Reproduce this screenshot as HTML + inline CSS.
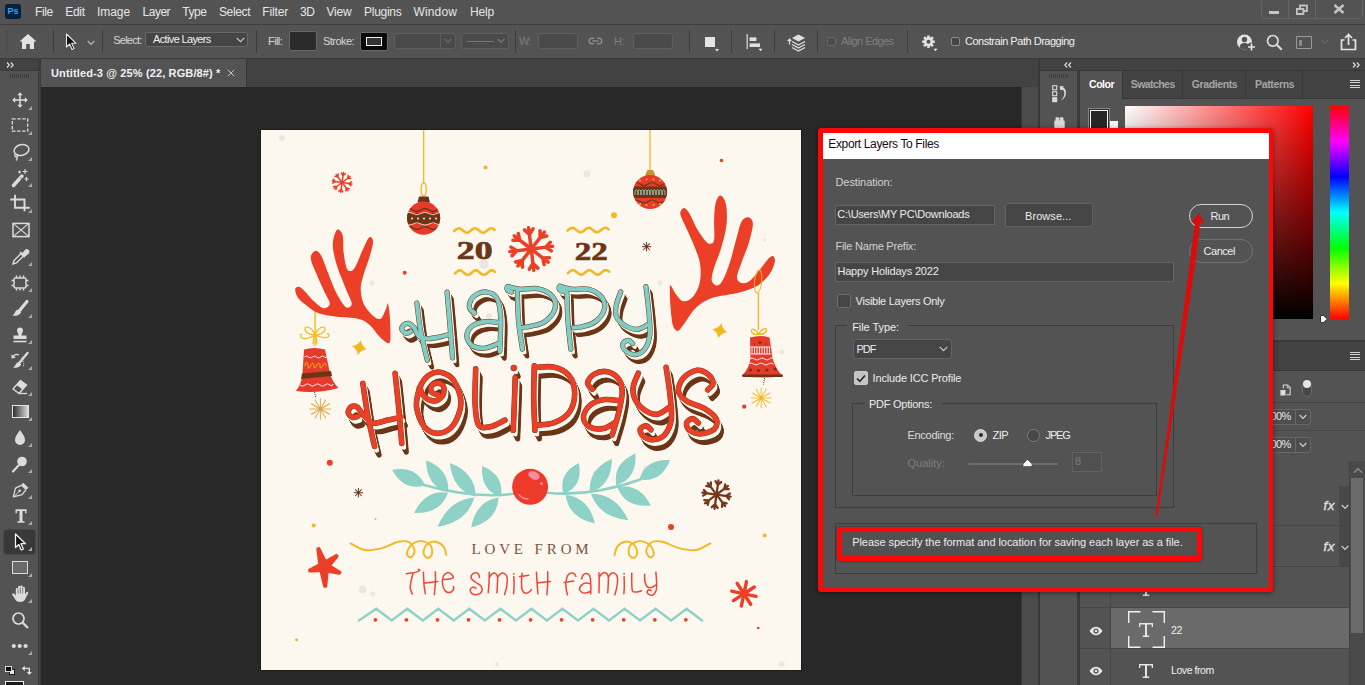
<!DOCTYPE html>
<html><head><meta charset="utf-8"><title>Photoshop</title>
<style>
html,body{margin:0;padding:0}
body{width:1365px;height:685px;overflow:hidden;position:relative;background:#535353;font-family:"Liberation Sans",sans-serif}
.a{position:absolute;display:block}
.bx{box-sizing:border-box}
.t{position:absolute;white-space:nowrap;display:block}
svg{overflow:visible}
</style></head>
<body>
<div class="a" style="left:0px;top:0px;width:1365px;height:24px;background:#535353;"></div>
<div class="a" style="left:5px;top:4px;width:16px;height:15px;background:#04213d;border-radius:3px;"></div>
<span class="t" style="left:7.50px;top:5.00px;font:bold 9px/13px 'Liberation Sans',sans-serif;color:#31a8ff;letter-spacing:-0.005px;">Ps</span>
<span class="t" style="left:35.10px;top:4.20px;font:12px/16px 'Liberation Sans',sans-serif;color:#e6e6e6;letter-spacing:-0.409px;">File</span>
<span class="t" style="left:65.30px;top:4.20px;font:12px/16px 'Liberation Sans',sans-serif;color:#e6e6e6;letter-spacing:-0.319px;">Edit</span>
<span class="t" style="left:97.10px;top:4.20px;font:12px/16px 'Liberation Sans',sans-serif;color:#e6e6e6;letter-spacing:-0.090px;">Image</span>
<span class="t" style="left:142.50px;top:4.20px;font:12px/16px 'Liberation Sans',sans-serif;color:#e6e6e6;letter-spacing:-0.484px;">Layer</span>
<span class="t" style="left:182.30px;top:4.20px;font:12px/16px 'Liberation Sans',sans-serif;color:#e6e6e6;letter-spacing:-0.454px;">Type</span>
<span class="t" style="left:218.90px;top:4.20px;font:12px/16px 'Liberation Sans',sans-serif;color:#e6e6e6;letter-spacing:-0.325px;">Select</span>
<span class="t" style="left:262.30px;top:4.20px;font:12px/16px 'Liberation Sans',sans-serif;color:#e6e6e6;letter-spacing:-0.128px;">Filter</span>
<span class="t" style="left:300.10px;top:4.20px;font:12px/16px 'Liberation Sans',sans-serif;color:#e6e6e6;letter-spacing:-0.420px;">3D</span>
<span class="t" style="left:326.50px;top:4.20px;font:12px/16px 'Liberation Sans',sans-serif;color:#e6e6e6;letter-spacing:-0.198px;">View</span>
<span class="t" style="left:364.00px;top:4.20px;font:12px/16px 'Liberation Sans',sans-serif;color:#e6e6e6;letter-spacing:-0.265px;">Plugins</span>
<span class="t" style="left:413.50px;top:4.20px;font:12px/16px 'Liberation Sans',sans-serif;color:#e6e6e6;letter-spacing:0.137px;">Window</span>
<span class="t" style="left:470.00px;top:4.20px;font:12px/16px 'Liberation Sans',sans-serif;color:#e6e6e6;letter-spacing:-0.170px;">Help</span>
<div class="a bx" style="left:1260.500px;top:-2px;width:102.500px;height:21px;border:1px solid #646464;border-radius:0 0 4px 4px;background:#535353"></div>
<div class="a" style="left:1288px;top:0px;width:1px;height:18px;background:#646464;"></div>
<div class="a" style="left:1315px;top:0px;width:1px;height:18px;background:#646464;"></div>
<div class="a" style="left:1269px;top:11px;width:10px;height:3px;background:#c4c4c4;"></div>
<svg class="a" style="left:1295px;top:4px" width="14" height="12" viewBox="0 0 14 12"><path d="M1.900 5h6.500v5h-6.500zM5 5v-3.500h7v5.500h-3.500" fill="none" stroke="#c0c0c0" stroke-width="1.800"/></svg>
<svg class="a" style="left:1333px;top:4px" width="12" height="10" viewBox="0 0 12 10"><path d="M1.500 1l9 8M10.500 1l-9 8" fill="none" stroke="#c4c4c4" stroke-width="2.400"/></svg>
<div class="a" style="left:0px;top:24px;width:1365px;height:1px;background:#3f3f3f;"></div>
<div class="a" style="left:0px;top:25px;width:1365px;height:33px;background:#535353;"></div>
<div class="a" style="left:0px;top:58px;width:1365px;height:1px;background:#3a3a3a;"></div>
<div class="a" style="left:6px;top:31px;width:2px;height:21px;background:repeating-linear-gradient(#474747 0 1px,transparent 1px 2px)"></div>
<svg class="a" style="left:19px;top:33px" width="18" height="17" viewBox="0 0 18 17"><path d="M9 1L0.5 8.5h2.5v7.5h4.2v-5h3.6v5h4.2v-7.5h2.5z" fill="#e2e2e2"/></svg>
<div class="a" style="left:53px;top:30px;width:1px;height:23px;background:#3c3c3c;"></div>
<div class="a" style="left:102px;top:30px;width:1px;height:23px;background:#3c3c3c;"></div>
<div class="a" style="left:256px;top:30px;width:1px;height:23px;background:#3c3c3c;"></div>
<div class="a" style="left:515px;top:30px;width:1px;height:23px;background:#3c3c3c;"></div>
<div class="a" style="left:689px;top:30px;width:1px;height:23px;background:#3c3c3c;"></div>
<div class="a" style="left:731px;top:30px;width:1px;height:23px;background:#3c3c3c;"></div>
<div class="a" style="left:774px;top:30px;width:1px;height:23px;background:#3c3c3c;"></div>
<div class="a" style="left:817px;top:30px;width:1px;height:23px;background:#3c3c3c;"></div>
<div class="a" style="left:907px;top:30px;width:1px;height:23px;background:#3c3c3c;"></div>
<svg class="a" style="left:65px;top:33px" width="13" height="18" viewBox="0 0 13 18"><path d="M1.5 1v13l3.2-3 2.3 5.5 2-0.9-2.3-5.3h4.3z" fill="#111" stroke="#e8e8e8" stroke-width="1.1" stroke-linejoin="round"/></svg>
<svg class="a" style="left:87px;top:40px" width="8" height="6" viewBox="0 0 8 6"><path d="M0.7 1l3.3 3.3L7.3 1" fill="none" stroke="#b8b8b8" stroke-width="1.2"/></svg>
<span class="t" style="left:113.30px;top:32.80px;font:11px/15px 'Liberation Sans',sans-serif;color:#d6d6d6;letter-spacing:-0.776px;">Select:</span>
<div class="a bx" style="left:144.5px;top:32px;width:103px;height:15px;background:#454545;border:1px solid #686868;border-radius:3px"></div>
<span class="t" style="left:153.00px;top:32.00px;font:11px/15px 'Liberation Sans',sans-serif;color:#f0f0f0;letter-spacing:-0.641px;">Active Layers</span>
<svg class="a" style="left:236px;top:37px" width="9" height="6" viewBox="0 0 9 6"><path d="M0.7 0.8l3.8 3.8L8.3 0.8" fill="none" stroke="#c8c8c8" stroke-width="1.2"/></svg>
<span class="t" style="left:268.00px;top:33.50px;font:11px/15px 'Liberation Sans',sans-serif;color:#d6d6d6;letter-spacing:-0.581px;">Fill:</span>
<div class="a bx" style="left:288.5px;top:31px;width:28.5px;height:20px;background:#2b2b2b;border:1px solid #676767;border-radius:2px"></div>
<span class="t" style="left:323.00px;top:33.50px;font:11px/15px 'Liberation Sans',sans-serif;color:#d6d6d6;letter-spacing:-0.550px;">Stroke:</span>
<div class="a bx" style="left:360px;top:32px;width:27.5px;height:18.5px;background:#0a0a0a;border:1px solid #6a6a6a;border-radius:2px"></div>
<div class="a bx" style="left:366px;top:37px;width:15.5px;height:8.5px;border:1.5px solid #f0f0f0;background:#333"></div>
<div class="a bx" style="left:393.5px;top:33px;width:62px;height:16px;background:#4a4a4a;border:1px solid #5f5f5f;border-radius:3px"></div>
<div class="a" style="left:440px;top:34px;width:1px;height:14px;background:#5f5f5f;"></div>
<svg class="a" style="left:444px;top:38px" width="8" height="6" viewBox="0 0 8 6"><path d="M0.7 1l3.3 3.3L7.3 1" fill="none" stroke="#6e6e6e" stroke-width="1.1"/></svg>
<div class="a bx" style="left:461px;top:33px;width:48px;height:16px;background:#4a4a4a;border:1px solid #5f5f5f;border-radius:3px"></div>
<div class="a" style="left:467px;top:41px;width:27px;height:1px;background:#767676;"></div>
<svg class="a" style="left:497px;top:38px" width="8" height="6" viewBox="0 0 8 6"><path d="M0.7 1l3.3 3.3L7.3 1" fill="none" stroke="#7a7a7a" stroke-width="1.1"/></svg>
<span class="t" style="left:519.00px;top:33.50px;font:11px/15px 'Liberation Sans',sans-serif;color:#7d7d7d;letter-spacing:-1.120px;">W:</span>
<div class="a bx" style="left:537.5px;top:33px;width:40px;height:16px;background:#4a4a4a;border:1px solid #5f5f5f;border-radius:3px"></div>
<svg class="a" style="left:588px;top:36px" width="15" height="10" viewBox="0 0 15 10"><path d="M6 2.2H4a2.8 2.8 0 000 5.6h2M9 2.2h2a2.8 2.8 0 010 5.6H9M4.5 5h6" fill="none" stroke="#8a8a8a" stroke-width="1.4"/></svg>
<span class="t" style="left:614.00px;top:33.50px;font:11px/15px 'Liberation Sans',sans-serif;color:#7d7d7d;letter-spacing:0.000px;">H:</span>
<div class="a bx" style="left:632.5px;top:33px;width:40px;height:16px;background:#4a4a4a;border:1px solid #5f5f5f;border-radius:3px"></div>
<div class="a" style="left:704.5px;top:36.6px;width:10.700000000000045px;height:10.600000000000001px;background:#e4e4e4;"></div>
<svg class="a" style="left:715px;top:48.800px" width="4" height="2.400" viewBox="0 0 4 2.400"><path d="M0 0h4L2 2.400z" fill="#e4e4e4"/></svg>
<svg class="a" style="left:746px;top:34px" width="18" height="18" viewBox="0 0 18 18"><path d="M1.200 0v15" stroke="#e0e0e0" stroke-width="1.200"/><rect x="3.600" y="3.400" width="6.800" height="3.600" fill="#e0e0e0"/><rect x="3.600" y="9.400" width="10.400" height="3.600" fill="#e0e0e0"/><path d="M12.500 14.800h4l-2 2.400z" fill="#e4e4e4"/></svg>
<svg class="a" style="left:786px;top:33px" width="20" height="19" viewBox="0 0 20 19"><path d="M3.500 11.500V6.300M1.600 8.200l1.900-2.100 1.900 2.100" fill="none" stroke="#e0e0e0" stroke-width="1.200"/><path d="M12.5 1.5L19 5l-6.500 3.500L6 5z" fill="#e0e0e0"/><path d="M6 8.500l6.500 3.500 6.500-3.500M6 11.500l6.500 3.500 6.500-3.500M6 14.500l6.500 3.500 6.500-3.500" fill="none" stroke="#e0e0e0" stroke-width="1.3"/></svg>
<div class="a bx" style="left:826.5px;top:36.500px;width:9.500px;height:9.500px;border:1px solid #666;border-radius:2px;background:#4c4c4c"></div>
<span class="t" style="left:841.00px;top:33.50px;font:11px/15px 'Liberation Sans',sans-serif;color:#7f7f7f;letter-spacing:-0.564px;">Align Edges</span>
<svg class="a" style="left:920px;top:33px" width="19" height="19" viewBox="0 0 19 19"><g transform="translate(8.500 8.700) scale(0.780)"><g fill="#e4e4e4"><rect x="-1.700" y="-8" width="3.400" height="16" transform="rotate(0)"/><rect x="-1.700" y="-8" width="3.400" height="16" transform="rotate(45)"/><rect x="-1.700" y="-8" width="3.400" height="16" transform="rotate(90)"/><rect x="-1.700" y="-8" width="3.400" height="16" transform="rotate(135)"/><circle r="5.600"/></g><circle r="2.600" fill="#535353"/></g><path d="M13.500 15.800h4l-2 2.400z" fill="#e4e4e4"/></svg>
<div class="a bx" style="left:950.5px;top:36.500px;width:9.500px;height:9.500px;border:1px solid #8a8a8a;border-radius:2px;background:#454545"></div>
<span class="t" style="left:965.00px;top:33.50px;font:11px/15px 'Liberation Sans',sans-serif;color:#f0f0f0;letter-spacing:-0.476px;">Constrain Path Dragging</span>
<svg class="a" style="left:1236px;top:33px" width="21" height="20" viewBox="0 0 21 20"><circle cx="8.500" cy="9" r="7.500" fill="#e4e4e4"/><circle cx="8.500" cy="6.500" r="2.700" fill="#535353"/><path d="M3.500 14.500c0.500-3.500 2.500-4.500 5-4.500s4.500 1 5 4.500a7 7 0 01-10 0z" fill="#535353"/><circle cx="15.500" cy="14" r="4.500" fill="#535353"/><path d="M15.500 10.500v7M12 14h7" stroke="#e4e4e4" stroke-width="1.600"/></svg>
<svg class="a" style="left:1265.500px;top:34px" width="17" height="17" viewBox="0 0 17 17"><circle cx="6.800" cy="6.800" r="5.300" fill="none" stroke="#dcdcdc" stroke-width="1.700"/><path d="M10.800 10.800l5 5" stroke="#dcdcdc" stroke-width="2"/></svg>
<div class="a bx" style="left:1295.500px;top:36px;width:16px;height:13px;border:1.500px solid #9a9a9a;border-radius:1px"></div>
<div class="a" style="left:1298.5px;top:39.5px;width:3.0px;height:6.5px;background:#8a8a8a;"></div>
<svg class="a" style="left:1321px;top:39px" width="8" height="6" viewBox="0 0 8 6"><path d="M0.700 1l3.300 3.300L7.300 1" fill="none" stroke="#6a6a6a" stroke-width="1.100"/></svg>
<svg class="a" style="left:1340px;top:32.500px" width="17" height="18" viewBox="0 0 17 18"><path d="M4.500 7H1.500v9.500h14V7h-3" fill="none" stroke="#e4e4e4" stroke-width="1.700"/><path d="M8.500 12V2M5 5l3.500-3.500L12 5" fill="none" stroke="#e4e4e4" stroke-width="1.700"/></svg>
<div class="a" style="left:41px;top:59px;width:997px;height:28px;background:#424242;"></div>
<div class="a" style="left:1038px;top:59px;width:2px;height:626px;background:#383838;"></div>
<div class="a" style="left:41px;top:59px;width:205px;height:28px;background:#535353;"></div>
<div class="a" style="left:246px;top:59px;width:1px;height:28px;background:#383838;"></div>
<span class="t" style="left:51.00px;top:65.50px;font:bold 11px/15px 'Liberation Sans',sans-serif;color:#f0f0f0;letter-spacing:0.133px;">Untitled-3 @ 25% (22, RGB/8#) *</span>
<svg class="a" style="left:227px;top:69px" width="8" height="8" viewBox="0 0 8 8"><path d="M0.800 0.800l6.400 6.400M7.200 0.800L0.800 7.200" stroke="#c4c4c4" stroke-width="1"/></svg>
<div class="a" style="left:41px;top:87px;width:981px;height:598px;background:#282828;"></div>
<div class="a" style="left:1021.5px;top:87px;width:16.5px;height:598px;background:#4b4b4b;"></div>
<div class="a" style="left:1020.5px;top:87px;width:1.0px;height:598px;background:#353535;"></div>
<div class="a" style="left:0px;top:59px;width:38px;height:626px;background:#535353;"></div>
<div class="a" style="left:38px;top:59px;width:3px;height:626px;background:#3a3a3a;"></div>
<div class="a" style="left:39.2px;top:71px;width:1.0px;height:614px;background:#474747;"></div>
<div class="a" style="left:0px;top:59px;width:38px;height:11px;background:#424242;"></div>
<div class="a" style="left:0px;top:70px;width:38px;height:1px;background:#3a3a3a;"></div>
<svg class="a" style="left:5.500px;top:62px" width="8" height="6" viewBox="0 0 8 6"><path d="M1 0.500L3.400 3 1 5.500M4.800 0.500L7.200 3 4.800 5.500" fill="none" stroke="#e0e0e0" stroke-width="1.100"/></svg>
<div class="a" style="left:10px;top:74px;width:20px;height:4px;background:repeating-linear-gradient(90deg,#3e3e3e 0 1px,transparent 1px 2px)"></div>
<div class="a" style="left:4px;top:530px;width:31px;height:24px;background:#383838;border-radius:3px;box-shadow:0 0 0 1px #484848"></div>
<svg class="a" style="left:9.5px;top:90.4px" width="20" height="20" viewBox="0 0 20 20"><g transform="translate(10 10) scale(0.800) translate(-10 -10)"><path d="M10 2v16M2 10h16" stroke="#dcdcdc" stroke-width="1.900"/><path d="M10 0.200l3.300 3.800h-6.600zM10 19.800l3.300-3.800h-6.600zM0.200 10l3.800-3.300v6.600zM19.800 10l-3.800-3.300v6.600z" fill="#dcdcdc"/></g></svg>
<svg class="a" style="left:10.3px;top:115.3px" width="20" height="20" viewBox="0 0 20 20"><rect x="2.300" y="3.800" width="15.400" height="12.400" fill="none" stroke="#dcdcdc" stroke-width="1.300" stroke-dasharray="3.400 1.600"/></svg>
<svg class="a" style="left:11.0px;top:142.0px" width="20" height="20" viewBox="0 0 20 20"><ellipse cx="10.500" cy="8" rx="7.500" ry="5.300" fill="none" stroke="#dcdcdc" stroke-width="1.500" transform="rotate(-12 10.500 8)"/><path d="M5 11.500c-2 1.500-1.500 3.500 0.500 3.500s1.500-2.500-0.500-2.500M6 14.500c0.500 2 0 3-1 4" fill="none" stroke="#dcdcdc" stroke-width="1.300"/></svg>
<svg class="a" style="left:10.0px;top:168.0px" width="20" height="20" viewBox="0 0 20 20"><path d="M3.500 17.500L12 8" stroke="#dcdcdc" stroke-width="3.400" stroke-linecap="round"/><path d="M10.300 9.800l1.600 1.500" stroke="#535353" stroke-width="1"/><path d="M15 1v5M12.500 3.500h5M16.500 9v4M14.500 11h4M9.500 2.500v3M8 4h3" stroke="#dcdcdc" stroke-width="1.100"/></svg>
<svg class="a" style="left:9.5px;top:192.7px" width="20" height="20" viewBox="0 0 20 20"><path d="M5 1.800v13H19.700M0.300 6.500h14.200V18.300" fill="none" stroke="#dcdcdc" stroke-width="1.900"/></svg>
<svg class="a" style="left:10.600000000000001px;top:219.8px" width="20" height="20" viewBox="0 0 20 20"><rect x="2" y="3.400" width="16" height="13.200" fill="none" stroke="#dcdcdc" stroke-width="1.500"/><path d="M2 3.400l16 13.200M18 3.400l-16 13.200" stroke="#dcdcdc" stroke-width="1.200"/></svg>
<svg class="a" style="left:10.0px;top:247.0px" width="20" height="20" viewBox="0 0 20 20"><path d="M3 17l1-3.500 7-7 2.500 2.500-7 7z" fill="none" stroke="#dcdcdc" stroke-width="1.400"/><path d="M10 5l5 5M12 7.500l3.500-4a1.800 1.800 0 012.600 2.600L14 9.500z" fill="#dcdcdc" stroke="#dcdcdc" stroke-width="1.600"/></svg>
<svg class="a" style="left:10.0px;top:273.0px" width="20" height="20" viewBox="0 0 20 20"><rect x="4" y="5" width="12" height="10" rx="1.500" fill="none" stroke="#dcdcdc" stroke-width="1.500"/><path d="M6.500 2.500v2M10 2.500v2M13.500 2.500v2M6.500 15.500v2M10 15.500v2M13.500 15.500v2M1.500 7.500h2M1.500 12.500h2M16.500 7.500h2M16.500 12.500h2" stroke="#dcdcdc" stroke-width="1.500"/></svg>
<svg class="a" style="left:10.0px;top:298.8px" width="20" height="20" viewBox="0 0 20 20"><path d="M17 2.500L10 11" stroke="#dcdcdc" stroke-width="3.200" stroke-linecap="round"/><path d="M8.500 10.500c-3.500 0-3 4-6 6 4.500 1 8.500-1 8.500-4z" fill="#dcdcdc"/></svg>
<svg class="a" style="left:10.0px;top:325.0px" width="20" height="20" viewBox="0 0 20 20"><path d="M10 2.500a3 3 0 013 3c0 2-1.500 2.500-1.500 5h5v3.500h-13v-3.500h5c0-2.500-1.500-3-1.500-5a3 3 0 013-3z" fill="#dcdcdc"/><path d="M3.500 16.500h13" stroke="#dcdcdc" stroke-width="1.600"/></svg>
<svg class="a" style="left:10.0px;top:350.5px" width="20" height="20" viewBox="0 0 20 20"><path d="M17.500 2L10 11" stroke="#dcdcdc" stroke-width="2.400" stroke-linecap="round"/><path d="M9 11c-3 0-3 4-6 5.500 4 1 8-1 8-3.500z" fill="#dcdcdc"/><path d="M2 7a5 5 0 017-3" fill="none" stroke="#dcdcdc" stroke-width="1.300"/><path d="M1 3.500l1 4 4-1z" fill="#dcdcdc"/><path d="M13 10c1 2 1 4 0 6" fill="none" stroke="#dcdcdc" stroke-width="1" stroke-dasharray="1 1"/></svg>
<svg class="a" style="left:10.0px;top:376.5px" width="20" height="20" viewBox="0 0 20 20"><path d="M3 12l7.500-8.500 6 4.500-7.500 8.500z" fill="none" stroke="#dcdcdc" stroke-width="1.400" stroke-linejoin="round"/><path d="M6.500 8l4-4.500 6 4.500-4 4.500z" fill="#dcdcdc"/><path d="M9 16.500h8" stroke="#dcdcdc" stroke-width="1.300"/></svg>
<div class="a bx" style="left:12px;top:404.800px;width:16.500px;height:13.200px;border:1.500px solid #e4e4e4;background:linear-gradient(90deg,#303030,#d8d8d8)"></div>
<svg class="a" style="left:10.0px;top:428.0px" width="20" height="20" viewBox="0 0 20 20"><path d="M10 2c3 4.500 5 7 5 10a5 5 0 01-10 0c0-3 2-5.500 5-10z" fill="#dcdcdc"/></svg>
<svg class="a" style="left:10.0px;top:454.0px" width="20" height="20" viewBox="0 0 20 20"><circle cx="12" cy="7.500" r="4.800" fill="#dcdcdc"/><path d="M8.500 11.500L3 17.500" stroke="#dcdcdc" stroke-width="2.200" stroke-linecap="round"/></svg>
<svg class="a" style="left:10.0px;top:480.0px" width="20" height="20" viewBox="0 0 20 20"><path d="M13.200 3.100L18 7.700 15.800 9.900 11.200 5.300z" fill="#dcdcdc" stroke="#dcdcdc" stroke-width="0.600" stroke-linejoin="round"/><path d="M11.200 5.300L5.500 8.100 3.300 16.900 12.100 14.700 15.800 9.900" fill="none" stroke="#dcdcdc" stroke-width="1.300" stroke-linejoin="round"/><circle cx="9.700" cy="10.800" r="1.300" fill="#dcdcdc"/><path d="M9.700 10.800L3.600 17" stroke="#dcdcdc" stroke-width="1"/></svg>
<svg class="a" style="left:10.600000000000001px;top:506.1px" width="20" height="20" viewBox="0 0 20 20"><path d="M4.500 3.200h11v4h-1.400v-2.300h-2.600v10.300h2v1.600h-7v-1.600h2v-10.300h-2.600v2.300h-1.400z" fill="#dcdcdc"/></svg>
<svg class="a" style="left:10.0px;top:532.0px" width="20" height="20" viewBox="0 0 20 20"><path d="M5.500 2v13.500l3.300-3 2.400 5.500 2.200-1-2.400-5.300h4.500z" fill="#111" stroke="#f2f2f2" stroke-width="1.300" stroke-linejoin="round"/></svg>
<div class="a bx" style="left:11.800px;top:561.300px;width:16px;height:12.500px;border:1.500px solid #dcdcdc;background:#6a6a6a"></div>
<svg class="a" style="left:10.2px;top:584.2px" width="20" height="20" viewBox="0 0 20 20"><path d="M5.800 11.500V5.200a1.150 1.150 0 012.300 0V3a1.150 1.150 0 012.300 0V2.600a1.150 1.150 0 012.300 0V4.200a1.150 1.150 0 012.300 0V10.500l1.300-2.200c0.800-1.200 2.400-0.300 1.800 1L16 13.500c-1 3-3 4.500-5.800 4.500-3 0-4.200-1.300-5.500-3.600L2.300 10.800c-0.700-1.200 1-2.200 1.900-1z" fill="#dcdcdc"/><path d="M8.100 9.500V5M10.400 9.500V3.500M12.700 9.500V4" stroke="#535353" stroke-width="0.700"/></svg>
<svg class="a" style="left:10.0px;top:610.0px" width="20" height="20" viewBox="0 0 20 20"><circle cx="8.500" cy="8.500" r="5.500" fill="none" stroke="#dcdcdc" stroke-width="1.700"/><path d="M12.500 12.500l5.500 5.500" stroke="#dcdcdc" stroke-width="2.300"/></svg>
<svg class="a" style="left:10.0px;top:636.0px" width="20" height="20" viewBox="0 0 20 20"><circle cx="3.800" cy="10" r="2.100" fill="#dcdcdc"/><circle cx="9.700" cy="10" r="2.100" fill="#dcdcdc"/><circle cx="15.600" cy="10" r="2.100" fill="#dcdcdc"/></svg>
<svg class="a" style="left:28.3px;top:105.8px" width="4" height="4"><path d="M4 0v4H0z" fill="#a8a8a8"/></svg>
<svg class="a" style="left:28.3px;top:131.3px" width="4" height="4"><path d="M4 0v4H0z" fill="#a8a8a8"/></svg>
<svg class="a" style="left:28.3px;top:157.3px" width="4" height="4"><path d="M4 0v4H0z" fill="#a8a8a8"/></svg>
<svg class="a" style="left:28.3px;top:183.3px" width="4" height="4"><path d="M4 0v4H0z" fill="#a8a8a8"/></svg>
<svg class="a" style="left:28.3px;top:209.3px" width="4" height="4"><path d="M4 0v4H0z" fill="#a8a8a8"/></svg>
<svg class="a" style="left:28.3px;top:262.3px" width="4" height="4"><path d="M4 0v4H0z" fill="#a8a8a8"/></svg>
<svg class="a" style="left:28.3px;top:288.3px" width="4" height="4"><path d="M4 0v4H0z" fill="#a8a8a8"/></svg>
<svg class="a" style="left:28.3px;top:314.3px" width="4" height="4"><path d="M4 0v4H0z" fill="#a8a8a8"/></svg>
<svg class="a" style="left:28.3px;top:340.3px" width="4" height="4"><path d="M4 0v4H0z" fill="#a8a8a8"/></svg>
<svg class="a" style="left:28.3px;top:365.8px" width="4" height="4"><path d="M4 0v4H0z" fill="#a8a8a8"/></svg>
<svg class="a" style="left:28.3px;top:391.8px" width="4" height="4"><path d="M4 0v4H0z" fill="#a8a8a8"/></svg>
<svg class="a" style="left:28.3px;top:417.3px" width="4" height="4"><path d="M4 0v4H0z" fill="#a8a8a8"/></svg>
<svg class="a" style="left:28.3px;top:443.3px" width="4" height="4"><path d="M4 0v4H0z" fill="#a8a8a8"/></svg>
<svg class="a" style="left:28.3px;top:469.3px" width="4" height="4"><path d="M4 0v4H0z" fill="#a8a8a8"/></svg>
<svg class="a" style="left:28.3px;top:495.3px" width="4" height="4"><path d="M4 0v4H0z" fill="#a8a8a8"/></svg>
<svg class="a" style="left:28.3px;top:521.3px" width="4" height="4"><path d="M4 0v4H0z" fill="#a8a8a8"/></svg>
<svg class="a" style="left:28.3px;top:547.3px" width="4" height="4"><path d="M4 0v4H0z" fill="#a8a8a8"/></svg>
<svg class="a" style="left:28.3px;top:573.3px" width="4" height="4"><path d="M4 0v4H0z" fill="#a8a8a8"/></svg>
<svg class="a" style="left:28.3px;top:599.3px" width="4" height="4"><path d="M4 0v4H0z" fill="#a8a8a8"/></svg>
<svg class="a" style="left:28.3px;top:651.3px" width="4" height="4"><path d="M4 0v4H0z" fill="#a8a8a8"/></svg>
<div class="a bx" style="left:8.800px;top:669.300px;width:6.500px;height:6px;background:#e8e8e8;border:0.500px solid #222"></div>
<div class="a bx" style="left:5.200px;top:665.800px;width:6.500px;height:6px;background:#0a0a0a;border:1px solid #d8d8d8"></div>
<svg class="a" style="left:21px;top:664px" width="12" height="12" viewBox="0 0 12 12"><path d="M3 4.400h5.300v4.200" fill="none" stroke="#e0e0e0" stroke-width="1.400"/><path d="M0.800 4.400l3-2.600v5.200zM8.300 11l-2.600-3h5.200z" fill="#e0e0e0"/></svg>
<div class="a bx" style="left:4.500px;top:680.500px;width:19px;height:10px;background:#1a1a1a;border:1.500px solid #f0f0f0"></div>
<svg class="a" style="left:261px;top:130px" width="540" height="540" viewBox="261 130 540 540">
<rect x="261" y="130" width="540" height="540" fill="#fdf8ef"/>
<circle cx="282" cy="138" r="3" fill="#ebe8e3"/>
<circle cx="587" cy="173.7" r="3.5" fill="#ebe8e3"/>
<circle cx="484" cy="264" r="5" fill="#ebe8e3"/>
<circle cx="372" cy="283" r="2.5" fill="#ebe8e3"/>
<circle cx="660" cy="283" r="2.5" fill="#ebe8e3"/>
<circle cx="362.7" cy="589.4" r="4" fill="#ebe8e3"/>
<circle cx="372.8" cy="593.8" r="2.5" fill="#ebe8e3"/>
<circle cx="781.8" cy="664" r="3" fill="#ebe8e3"/>
<circle cx="596" cy="474" r="3.5" fill="#ebe8e3"/>
<circle cx="647" cy="470" r="4.5" fill="#ebe8e3"/>
<circle cx="782" cy="352" r="2.5" fill="#ebe8e3"/>
<circle cx="497" cy="664" r="2" fill="#ebe8e3"/>
<circle cx="489" cy="316" r="3" fill="#ebe8e3"/>
<circle cx="765" cy="240" r="1.5" fill="#ebe8e3"/>
<path d="M423.700 130V183M650 130V170" stroke="#f2b81f" stroke-width="1.300" fill="none"/>
<ellipse cx="423.700" cy="189.500" rx="2.600" ry="6.500" fill="none" stroke="#f2b81f" stroke-width="1.300"/>
<path d="M419 196.500h9.500l1.500 6h-12.500z" fill="#6b3618"/>
<circle cx="423.600" cy="218.200" r="16.600" fill="#e63a2a"/>
<clipPath id="c1"><circle cx="423.600" cy="218.200" r="16.600"/></clipPath><g clip-path="url(#c1)"><rect x="405" y="213" width="40" height="11" fill="#6b3618"/><path d="M405 210q4-3 8 0t8 0 8 0 8 0 8 0" stroke="#6b3618" stroke-width="1.300" fill="none"/><path d="M405 228q4-3 8 0t8 0 8 0 8 0 8 0" stroke="#6b3618" stroke-width="1.300" fill="none"/><path d="M405 213.500q4-2.500 8 0t8 0 8 0 8 0 8 0M405 224q4 2.500 8 0t8 0 8 0 8 0 8 0" stroke="#f6d9c8" stroke-width="0.900" fill="none"/><g fill="#f6e7d0"><circle cx="412" cy="218.500" r="1"/><circle cx="418" cy="218.500" r="1"/><circle cx="424" cy="218.500" r="1"/><circle cx="430" cy="218.500" r="1"/><circle cx="436" cy="218.500" r="1"/></g></g>
<path d="M646 173l1.500-3h5.500l1.500 3 1 3.500h-10.500z" fill="#c8922e"/>
<circle cx="650.100" cy="192" r="17" fill="#e63a2a"/>
<clipPath id="c2"><circle cx="650.100" cy="192" r="17"/></clipPath><g clip-path="url(#c2)"><rect x="630" y="186.500" width="40" height="11.500" fill="#6b3618"/><path d="M632 184q4-3 8 0t8 0 8 0 8 0 8 0M632 201.500q4-3 8 0t8 0 8 0 8 0 8 0" stroke="#6b3618" stroke-width="1.200" fill="none"/><path d="M635 195v-4q1.500-2.500 3 0v4m0 0v-4q1.500-2.500 3 0v4m0 0v-4q1.500-2.500 3 0v4m0 0v-4q1.500-2.500 3 0v4m0 0v-4q1.500-2.500 3 0v4m0 0v-4q1.500-2.500 3 0v4m0 0v-4q1.500-2.500 3 0v4m0 0v-4q1.500-2.500 3 0v4m0 0v-4q1.500-2.500 3 0v4m0 0v-4q1.500-2.500 3 0v4" stroke="#9ed0c4" stroke-width="0.800" fill="none"/><g fill="#f2b81f"><circle cx="640" cy="180.500" r="1"/><circle cx="646.500" cy="179.500" r="1"/><circle cx="653.500" cy="179.500" r="1"/><circle cx="660" cy="180.500" r="1"/><circle cx="640" cy="204" r="1"/><circle cx="646.500" cy="205" r="1"/><circle cx="653.500" cy="205" r="1"/><circle cx="660" cy="204" r="1"/></g></g>
<g transform="translate(342.1 182.5) rotate(8)" stroke="#eb3f27" stroke-width="1.5" stroke-linecap="round" fill="none"><g transform="rotate(0.0)"><path d="M0 0V-10.0M0 -6.8l-2.0 -2.4M0 -6.8l2.0 -2.4"/></g><g transform="rotate(45.0)"><path d="M0 0V-10.0M0 -6.8l-2.0 -2.4M0 -6.8l2.0 -2.4"/></g><g transform="rotate(90.0)"><path d="M0 0V-10.0M0 -6.8l-2.0 -2.4M0 -6.8l2.0 -2.4"/></g><g transform="rotate(135.0)"><path d="M0 0V-10.0M0 -6.8l-2.0 -2.4M0 -6.8l2.0 -2.4"/></g><g transform="rotate(180.0)"><path d="M0 0V-10.0M0 -6.8l-2.0 -2.4M0 -6.8l2.0 -2.4"/></g><g transform="rotate(225.0)"><path d="M0 0V-10.0M0 -6.8l-2.0 -2.4M0 -6.8l2.0 -2.4"/></g><g transform="rotate(270.0)"><path d="M0 0V-10.0M0 -6.8l-2.0 -2.4M0 -6.8l2.0 -2.4"/></g><g transform="rotate(315.0)"><path d="M0 0V-10.0M0 -6.8l-2.0 -2.4M0 -6.8l2.0 -2.4"/></g><circle r="1.4" fill="#eb3f27" stroke="none"/></g>
<g transform="translate(531.2 249.0) rotate(-7)" stroke="#eb3f27" stroke-width="3.5" stroke-linecap="round" fill="none"><g transform="rotate(0.0)"><path d="M0 0V-21.5M0 -14.6l-4.3 -5.2M0 -14.6l4.3 -5.2"/></g><g transform="rotate(45.0)"><path d="M0 0V-21.5M0 -14.6l-4.3 -5.2M0 -14.6l4.3 -5.2"/></g><g transform="rotate(90.0)"><path d="M0 0V-21.5M0 -14.6l-4.3 -5.2M0 -14.6l4.3 -5.2"/></g><g transform="rotate(135.0)"><path d="M0 0V-21.5M0 -14.6l-4.3 -5.2M0 -14.6l4.3 -5.2"/></g><g transform="rotate(180.0)"><path d="M0 0V-21.5M0 -14.6l-4.3 -5.2M0 -14.6l4.3 -5.2"/></g><g transform="rotate(225.0)"><path d="M0 0V-21.5M0 -14.6l-4.3 -5.2M0 -14.6l4.3 -5.2"/></g><g transform="rotate(270.0)"><path d="M0 0V-21.5M0 -14.6l-4.3 -5.2M0 -14.6l4.3 -5.2"/></g><g transform="rotate(315.0)"><path d="M0 0V-21.5M0 -14.6l-4.3 -5.2M0 -14.6l4.3 -5.2"/></g><circle r="3.1" fill="#eb3f27" stroke="none"/></g>
<g transform="translate(716.5 494.6) rotate(8)" stroke="#74371b" stroke-width="2.3" stroke-linecap="round" fill="none"><g transform="rotate(0.0)"><path d="M0 0V-14.3M0 -9.7l-2.9 -3.4M0 -9.7l2.9 -3.4"/></g><g transform="rotate(45.0)"><path d="M0 0V-14.3M0 -9.7l-2.9 -3.4M0 -9.7l2.9 -3.4"/></g><g transform="rotate(90.0)"><path d="M0 0V-14.3M0 -9.7l-2.9 -3.4M0 -9.7l2.9 -3.4"/></g><g transform="rotate(135.0)"><path d="M0 0V-14.3M0 -9.7l-2.9 -3.4M0 -9.7l2.9 -3.4"/></g><g transform="rotate(180.0)"><path d="M0 0V-14.3M0 -9.7l-2.9 -3.4M0 -9.7l2.9 -3.4"/></g><g transform="rotate(225.0)"><path d="M0 0V-14.3M0 -9.7l-2.9 -3.4M0 -9.7l2.9 -3.4"/></g><g transform="rotate(270.0)"><path d="M0 0V-14.3M0 -9.7l-2.9 -3.4M0 -9.7l2.9 -3.4"/></g><g transform="rotate(315.0)"><path d="M0 0V-14.3M0 -9.7l-2.9 -3.4M0 -9.7l2.9 -3.4"/></g><circle r="2.1" fill="#74371b" stroke="none"/></g>
<g transform="translate(646.6 246.7) rotate(0)" stroke="#6b3618" stroke-width="1" stroke-linecap="round" fill="none"><g transform="rotate(0.0)"><path d="M0 0V-4.3"/></g><g transform="rotate(45.0)"><path d="M0 0V-4.3"/></g><g transform="rotate(90.0)"><path d="M0 0V-4.3"/></g><g transform="rotate(135.0)"><path d="M0 0V-4.3"/></g><g transform="rotate(180.0)"><path d="M0 0V-4.3"/></g><g transform="rotate(225.0)"><path d="M0 0V-4.3"/></g><g transform="rotate(270.0)"><path d="M0 0V-4.3"/></g><g transform="rotate(315.0)"><path d="M0 0V-4.3"/></g></g>
<g transform="translate(358.4 492.7) rotate(0)" stroke="#6b3618" stroke-width="1" stroke-linecap="round" fill="none"><g transform="rotate(0.0)"><path d="M0 0V-4.3"/></g><g transform="rotate(45.0)"><path d="M0 0V-4.3"/></g><g transform="rotate(90.0)"><path d="M0 0V-4.3"/></g><g transform="rotate(135.0)"><path d="M0 0V-4.3"/></g><g transform="rotate(180.0)"><path d="M0 0V-4.3"/></g><g transform="rotate(225.0)"><path d="M0 0V-4.3"/></g><g transform="rotate(270.0)"><path d="M0 0V-4.3"/></g><g transform="rotate(315.0)"><path d="M0 0V-4.3"/></g></g>
<text transform="translate(456.8 259.3) scale(1.428 1)" font-family="Liberation Serif" font-weight="bold" font-size="25" fill="#6b3618" stroke="#6b3618" stroke-width="0.700">20</text>
<text transform="translate(574.7 260.2) scale(1.316 1)" font-family="Liberation Serif" font-weight="bold" font-size="25" fill="#6b3618" stroke="#6b3618" stroke-width="0.700">22</text>
<path d="M454.0,231.2C454.2,231.0 454.7,230.6 455.0,230.3C455.3,230.0 455.7,229.8 456.0,229.5C456.4,229.3 456.7,229.0 457.0,228.8C457.4,228.6 457.7,228.5 458.1,228.4C458.4,228.3 458.7,228.3 459.1,228.3C459.4,228.3 459.7,228.4 460.1,228.5C460.4,228.7 460.8,228.9 461.1,229.1C461.4,229.3 461.8,229.6 462.1,229.8C462.4,230.1 462.8,230.4 463.1,230.7C463.4,231.0 463.8,231.2 464.1,231.5C464.5,231.7 464.8,232.0 465.1,232.2C465.5,232.4 465.8,232.5 466.1,232.6C466.5,232.7 466.8,232.7 467.2,232.7C467.5,232.7 467.8,232.6 468.2,232.5C468.5,232.3 468.9,232.1 469.2,231.9C469.5,231.7 469.9,231.4 470.2,231.2C470.5,230.9 470.9,230.6 471.2,230.3C471.5,230.0 471.9,229.8 472.2,229.5C472.6,229.3 472.9,229.0 473.2,228.8C473.6,228.6 473.9,228.5 474.2,228.4C474.6,228.3 474.9,228.3 475.3,228.3C475.6,228.3 475.9,228.4 476.3,228.5C476.6,228.7 477.0,228.9 477.3,229.1C477.6,229.3 478.0,229.6 478.3,229.8C478.6,230.1 479.0,230.4 479.3,230.7C479.6,231.0 480.0,231.2 480.3,231.5C480.7,231.7 481.0,232.0 481.3,232.2C481.7,232.4 482.0,232.5 482.4,232.6C482.7,232.7 483.0,232.7 483.4,232.7C483.7,232.7 484.0,232.6 484.4,232.5C484.7,232.3 485.1,232.1 485.4,231.9C485.7,231.7 486.1,231.4 486.4,231.2C486.7,230.9 487.1,230.6 487.4,230.3C487.8,230.0 488.1,229.8 488.4,229.5C488.8,229.3 489.1,229.0 489.4,228.8C489.8,228.6 490.1,228.5 490.4,228.4C490.8,228.3 491.1,228.3 491.5,228.3C491.8,228.3 492.1,228.4 492.5,228.5C492.8,228.7 493.2,228.9 493.5,229.1C493.8,229.3 494.3,229.7 494.5,229.8" fill="none" stroke="#f2b81f" stroke-width="2.600" stroke-linecap="round"/>
<path d="M455.0,273.3C455.2,273.1 455.7,272.7 456.0,272.4C456.3,272.1 456.7,271.9 457.0,271.6C457.3,271.4 457.7,271.1 458.0,270.9C458.3,270.7 458.7,270.6 459.0,270.5C459.3,270.4 459.7,270.4 460.0,270.4C460.3,270.4 460.7,270.5 461.0,270.6C461.3,270.8 461.7,271.0 462.0,271.2C462.3,271.4 462.7,271.7 463.0,271.9C463.3,272.2 463.7,272.5 464.0,272.8C464.3,273.1 464.7,273.3 465.0,273.6C465.3,273.8 465.7,274.1 466.0,274.3C466.3,274.5 466.7,274.6 467.0,274.7C467.3,274.8 467.7,274.8 468.0,274.8C468.3,274.8 468.7,274.7 469.0,274.6C469.3,274.4 469.7,274.2 470.0,274.0C470.3,273.8 470.7,273.5 471.0,273.3C471.3,273.0 471.7,272.7 472.0,272.4C472.3,272.1 472.7,271.9 473.0,271.6C473.3,271.4 473.7,271.1 474.0,270.9C474.3,270.7 474.7,270.6 475.0,270.5C475.3,270.4 475.7,270.4 476.0,270.4C476.3,270.4 476.7,270.5 477.0,270.6C477.3,270.8 477.7,271.0 478.0,271.2C478.3,271.4 478.7,271.7 479.0,271.9C479.3,272.2 479.7,272.5 480.0,272.8C480.3,273.1 480.7,273.3 481.0,273.6C481.3,273.8 481.7,274.1 482.0,274.3C482.3,274.5 482.7,274.6 483.0,274.7C483.3,274.8 483.7,274.8 484.0,274.8C484.3,274.8 484.7,274.7 485.0,274.6C485.3,274.4 485.7,274.2 486.0,274.0C486.3,273.8 486.7,273.5 487.0,273.3C487.3,273.0 487.7,272.7 488.0,272.4C488.3,272.1 488.7,271.9 489.0,271.6C489.3,271.4 489.7,271.1 490.0,270.9C490.3,270.7 490.7,270.6 491.0,270.5C491.3,270.4 491.7,270.4 492.0,270.4C492.3,270.4 492.7,270.5 493.0,270.6C493.3,270.8 493.7,271.0 494.0,271.2C494.3,271.4 494.8,271.8 495.0,271.9" fill="none" stroke="#f2b81f" stroke-width="2.600" stroke-linecap="round"/>
<path d="M567.5,230.7C567.7,230.5 568.2,230.1 568.5,229.8C568.9,229.5 569.2,229.3 569.5,229.0C569.9,228.8 570.2,228.5 570.6,228.3C570.9,228.1 571.3,228.0 571.6,227.9C571.9,227.8 572.3,227.8 572.6,227.8C573.0,227.8 573.3,227.9 573.6,228.0C574.0,228.2 574.3,228.4 574.7,228.6C575.0,228.8 575.4,229.1 575.7,229.3C576.0,229.6 576.4,229.9 576.7,230.2C577.1,230.5 577.4,230.7 577.8,231.0C578.1,231.2 578.4,231.5 578.8,231.7C579.1,231.9 579.5,232.0 579.8,232.1C580.1,232.2 580.5,232.2 580.8,232.2C581.2,232.2 581.5,232.1 581.9,232.0C582.2,231.8 582.5,231.6 582.9,231.4C583.2,231.2 583.6,230.9 583.9,230.7C584.2,230.4 584.6,230.1 584.9,229.8C585.3,229.5 585.6,229.3 586.0,229.0C586.3,228.8 586.6,228.5 587.0,228.3C587.3,228.1 587.7,228.0 588.0,227.9C588.3,227.8 588.7,227.8 589.0,227.8C589.4,227.8 589.7,227.9 590.0,228.0C590.4,228.2 590.7,228.4 591.1,228.6C591.4,228.8 591.8,229.1 592.1,229.3C592.4,229.6 592.8,229.9 593.1,230.2C593.5,230.5 593.8,230.7 594.1,231.0C594.5,231.2 594.8,231.5 595.2,231.7C595.5,231.9 595.9,232.0 596.2,232.1C596.5,232.2 596.9,232.2 597.2,232.2C597.6,232.2 597.9,232.1 598.2,232.0C598.6,231.8 598.9,231.6 599.3,231.4C599.6,231.2 600.0,230.9 600.3,230.7C600.6,230.4 601.0,230.1 601.3,229.8C601.7,229.5 602.0,229.3 602.4,229.0C602.7,228.8 603.0,228.5 603.4,228.3C603.7,228.1 604.1,228.0 604.4,227.9C604.7,227.8 605.1,227.8 605.4,227.8C605.8,227.8 606.1,227.9 606.5,228.0C606.8,228.2 607.1,228.4 607.5,228.6C607.8,228.8 608.3,229.2 608.5,229.3" fill="none" stroke="#f2b81f" stroke-width="2.600" stroke-linecap="round"/>
<path d="M568.0,273.1C568.2,272.9 568.7,272.5 569.0,272.2C569.4,271.9 569.7,271.7 570.0,271.4C570.4,271.2 570.7,270.9 571.1,270.7C571.4,270.5 571.8,270.4 572.1,270.3C572.4,270.2 572.8,270.2 573.1,270.2C573.5,270.2 573.8,270.3 574.1,270.4C574.5,270.6 574.8,270.8 575.2,271.0C575.5,271.2 575.9,271.5 576.2,271.7C576.5,272.0 576.9,272.3 577.2,272.6C577.6,272.9 577.9,273.1 578.2,273.4C578.6,273.6 578.9,273.9 579.3,274.1C579.6,274.3 580.0,274.4 580.3,274.5C580.6,274.6 581.0,274.6 581.3,274.6C581.7,274.6 582.0,274.5 582.4,274.4C582.7,274.2 583.0,274.0 583.4,273.8C583.7,273.6 584.1,273.3 584.4,273.1C584.7,272.8 585.1,272.5 585.4,272.2C585.8,271.9 586.1,271.7 586.5,271.4C586.8,271.2 587.1,270.9 587.5,270.7C587.8,270.5 588.2,270.4 588.5,270.3C588.8,270.2 589.2,270.2 589.5,270.2C589.9,270.2 590.2,270.3 590.5,270.4C590.9,270.6 591.2,270.8 591.6,271.0C591.9,271.2 592.3,271.5 592.6,271.7C592.9,272.0 593.3,272.3 593.6,272.6C594.0,272.9 594.3,273.1 594.6,273.4C595.0,273.6 595.3,273.9 595.7,274.1C596.0,274.3 596.4,274.4 596.7,274.5C597.0,274.6 597.4,274.6 597.7,274.6C598.1,274.6 598.4,274.5 598.8,274.4C599.1,274.2 599.4,274.0 599.8,273.8C600.1,273.6 600.5,273.3 600.8,273.1C601.1,272.8 601.5,272.5 601.8,272.2C602.2,271.9 602.5,271.7 602.9,271.4C603.2,271.2 603.5,270.9 603.9,270.7C604.2,270.5 604.6,270.4 604.9,270.3C605.2,270.2 605.6,270.2 605.9,270.2C606.3,270.2 606.6,270.3 607.0,270.4C607.3,270.6 607.6,270.8 608.0,271.0C608.3,271.2 608.8,271.6 609.0,271.7" fill="none" stroke="#f2b81f" stroke-width="2.600" stroke-linecap="round"/>
<circle cx="485.5" cy="167.4" r="2" fill="#f2b81f"/>
<circle cx="614" cy="215.2" r="3" fill="#f2b81f"/>
<circle cx="313.7" cy="525.6" r="2" fill="#f2b81f"/>
<circle cx="375.5" cy="519" r="1" fill="#f2b81f"/>
<circle cx="296.6" cy="639.8" r="1.5" fill="#f2b81f"/>
<circle cx="764.7" cy="535.4" r="2" fill="#f2b81f"/>
<circle cx="329.8" cy="462.8" r="3" fill="#eb3f27"/>
<circle cx="671" cy="527" r="3" fill="#eb3f27"/>
<circle cx="744.2" cy="406.6" r="2.2" fill="#eb3f27"/>
<circle cx="345.5" cy="273" r="1.8" fill="#eb3f27"/>
<circle cx="721.5" cy="160.5" r="1.8" fill="#eb3f27"/>
<circle cx="758.3" cy="628" r="1.3" fill="#eb3f27"/>
<circle cx="404.7" cy="272.8" r="2" fill="#eb3f27"/>
<path d="M295.2,289.3C295.3,287.4 297.4,286.5 299.0,286.8C300.6,287.1 302.1,288.7 304.7,291.2C307.2,293.6 311.0,298.8 314.2,301.6C317.3,304.5 321.1,307.9 323.7,308.3C326.2,308.6 329.7,306.5 329.7,303.5C329.7,300.5 325.9,295.3 323.7,290.2C321.4,285.2 318.2,278.5 316.1,273.1C313.9,267.8 310.9,261.7 310.7,258.0C310.6,254.3 313.4,251.4 315.1,250.9C316.8,250.5 318.7,251.7 320.8,255.1C322.9,258.5 325.1,265.4 327.4,271.2C329.8,277.1 332.5,284.8 335.0,290.2C337.6,295.6 340.6,300.6 342.6,303.5C344.7,306.4 345.9,307.7 347.4,307.7C348.9,307.7 351.9,306.4 351.7,303.5C351.6,300.6 348.9,296.5 346.4,290.2C344.0,283.9 339.2,273.1 336.9,265.5C334.7,258.0 332.8,250.6 332.8,244.7C332.8,238.7 335.3,231.5 336.9,229.9C338.6,228.3 341.5,231.5 342.6,235.2C343.7,238.9 342.9,246.9 343.6,252.3C344.2,257.6 345.3,264.3 346.4,267.4C347.5,270.5 348.8,270.9 350.2,270.9C351.6,270.9 353.1,270.5 355.0,267.4C356.9,264.3 359.6,256.9 361.6,252.3C363.7,247.7 365.8,242.5 367.3,239.9C368.8,237.4 369.8,236.6 370.7,237.1C371.7,237.6 373.2,239.3 373.0,242.8C372.7,246.3 370.8,252.6 369.2,258.0C367.6,263.3 364.9,270.0 363.5,275.0C362.1,280.1 360.7,283.6 360.7,288.3C360.7,293.1 361.5,298.9 363.5,303.5C365.6,308.1 370.1,313.3 373.0,315.8C375.8,318.4 378.4,319.8 380.6,318.7C382.7,317.6 384.7,311.7 385.9,309.2C387.1,306.7 387.2,302.6 387.8,303.5C388.4,304.5 389.3,309.8 389.7,314.9C390.1,320.0 390.5,329.3 390.5,333.9C390.5,338.5 390.4,341.0 389.7,342.4C389.0,343.8 388.1,343.5 386.3,342.4C384.4,341.3 381.5,338.8 378.7,335.8C375.8,332.8 372.7,327.2 369.2,324.4C365.7,321.5 363.2,320.0 357.8,318.7C352.4,317.4 343.6,317.7 336.9,316.8C330.3,315.8 323.0,314.9 318.0,313.0C312.9,311.1 309.9,307.9 306.6,305.4C303.2,302.9 299.9,300.5 298.0,297.8C296.1,295.1 295.0,291.1 295.2,289.3Z" fill="#eb3f27"/>
<path d="M680.5,211.8C681.0,210.4 682.4,207.7 683.8,207.9C685.2,208.1 686.9,209.4 689.2,213.0C691.4,216.6 694.6,224.7 697.3,229.3C700.1,234.0 703.4,238.6 705.5,241.0C707.7,243.4 708.7,244.0 710.2,243.8C711.6,243.6 713.5,243.8 714.1,239.8C714.8,235.9 713.9,226.0 714.1,220.0C714.4,214.0 714.5,207.8 715.5,203.7C716.6,199.6 718.5,195.5 720.2,195.5C721.9,195.5 724.8,198.8 725.8,203.7C726.9,208.5 727.3,217.3 726.5,224.7C725.7,232.1 723.3,240.6 721.1,248.0C719.0,255.4 715.2,263.6 713.7,269.0C712.1,274.5 711.3,278.0 711.8,280.7C712.3,283.4 714.7,285.4 716.5,285.4C718.3,285.4 720.3,284.6 722.5,280.7C724.8,276.8 727.6,269.4 730.0,262.0C732.4,254.6 735.1,243.2 737.0,236.3C739.0,229.5 739.8,224.4 741.7,221.2C743.6,218.0 746.4,216.8 748.2,217.2C750.1,217.6 752.8,219.2 752.9,223.5C753.0,227.9 750.6,236.9 748.7,243.3C746.8,249.8 743.6,256.4 741.7,262.0C739.7,267.7 737.0,273.7 737.0,277.2C737.0,280.7 739.5,282.4 741.7,283.0C743.8,283.6 746.7,283.0 749.9,280.7C753.0,278.4 757.2,272.7 760.4,269.0C763.5,265.3 766.4,260.7 768.5,258.5C770.7,256.4 772.1,255.6 773.2,256.2C774.2,256.8 775.4,259.1 774.8,262.0C774.2,264.9 772.5,269.8 769.7,273.7C766.9,277.6 763.1,282.2 758.0,285.4C753.0,288.5 747.1,290.2 739.4,292.4C731.6,294.5 718.7,295.5 711.3,298.2C704.0,300.9 699.7,304.2 695.0,308.7C690.3,313.2 686.3,321.3 683.3,325.0C680.4,328.7 679.3,330.9 677.5,330.9C675.8,330.9 674.0,329.1 672.8,325.0C671.7,321.0 671.0,312.2 670.5,306.4C670.0,300.5 669.8,293.5 669.8,290.0C669.8,286.5 669.6,284.6 670.7,285.4C671.8,286.1 674.2,292.1 676.3,294.7C678.4,297.3 680.6,300.8 683.3,301.2C686.1,301.6 690.0,300.1 692.7,297.0C695.4,294.0 698.4,288.5 699.7,283.0C700.9,277.6 700.9,270.2 700.1,264.4C699.4,258.5 697.2,253.9 695.0,248.0C692.8,242.2 689.2,234.6 686.8,229.3C684.5,224.1 682.1,219.4 681.0,216.5C680.0,213.6 680.1,213.3 680.5,211.8Z" fill="#eb3f27"/>
<path transform="rotate(12 359.3 347.6)" d="M359.3,340.1Q361.21250000000003,345.6875 366.8,347.6Q361.21250000000003,349.51250000000005 359.3,355.1Q357.3875,349.51250000000005 351.8,347.6Q357.3875,345.6875 359.3,340.1Z" fill="#f2b81f"/>
<path transform="rotate(12 719.9 330.7)" d="M719.9,323.2Q721.8125,328.78749999999997 727.4,330.7Q721.8125,332.6125 719.9,338.2Q717.9875,332.6125 712.4,330.7Q717.9875,328.78749999999997 719.9,323.2Z" fill="#f2b81f"/>
<path d="M315.100 312V346" stroke="#f2b81f" stroke-width="1.400"/>
<path d="M315 335c-3-8-10-10-10-6s6 6 10 6c4 0 10-2 10-6s-7-2-10 6M315 335c-5 3-9 5-13 3-2-1-2-4 0-4M315 335c5 2 9 4 13 2 2-1 1-4-1-3M314 336l-1 8M316 336l1 8" fill="none" stroke="#f2b81f" stroke-width="1.200" stroke-linecap="round"/>
<path d="M304 349.500q10.500-3 21 0l5 24q2 8 8.500 14.500-21 6-42.500 3 6-8 6.500-17.500z" fill="#e63a2a"/>
<path d="M302 373.500l29-2.500 1 5-31 3z" fill="#6b3618"/>
<path d="M304.500 357q2-2 4 0t4 0 4 0 4 0 4 0 2-0.500" stroke="#fff" stroke-width="0.900" fill="none"/><path d="M300 385q2.500 2.500 5 0t5 0 5 0 5 0 5 0 5 0 3-1" stroke="#fff" stroke-width="0.900" fill="none"/>
<path d="M305 366c0-5 3-5 3 0s3 0 3-1 3-4 3 1 3 0 3-1 3-4 3 1 3 0 3-1 3-4 3 1" stroke="#f2b81f" stroke-width="1" fill="none"/>
<path d="M314.500 392l1.500 6" stroke="#333" stroke-width="1" stroke-dasharray="1 1"/>
<g transform="translate(320.4 409.0) rotate(0)" stroke="#d9a441" stroke-width="0.9" stroke-linecap="round" fill="none"><g transform="rotate(0.0)"><path d="M0 0V-10.5"/></g><g transform="rotate(30.0)"><path d="M0 0V-10.5"/></g><g transform="rotate(60.0)"><path d="M0 0V-10.5"/></g><g transform="rotate(90.0)"><path d="M0 0V-10.5"/></g><g transform="rotate(120.0)"><path d="M0 0V-10.5"/></g><g transform="rotate(150.0)"><path d="M0 0V-10.5"/></g><g transform="rotate(180.0)"><path d="M0 0V-10.5"/></g><g transform="rotate(210.0)"><path d="M0 0V-10.5"/></g><g transform="rotate(240.0)"><path d="M0 0V-10.5"/></g><g transform="rotate(270.0)"><path d="M0 0V-10.5"/></g><g transform="rotate(300.0)"><path d="M0 0V-10.5"/></g><g transform="rotate(330.0)"><path d="M0 0V-10.5"/></g></g>
<circle cx="320.400" cy="409" r="1.800" fill="#d9a441"/>
<path d="M758.400 293V330" stroke="#f2b81f" stroke-width="1.400"/><ellipse cx="758.200" cy="281.500" rx="3.600" ry="11.500" fill="none" stroke="#f2b81f" stroke-width="1" transform="rotate(6 758 281)"/>
<path d="M758.500 334c-3-5-7-6-7-3s4 4 7 3c3 1 8-1 8-4s-5-1-8 4" fill="none" stroke="#f2b81f" stroke-width="1.400" stroke-linecap="round"/>
<path d="M750 337.500q10-3 19.500 0l3 20q2 10 10 18.500-20 3-40.500 0 8-9 8.500-18.500z" fill="#e63a2a"/>
<path d="M742 374.500h41l-0.500 2.500h-40z" fill="#6b3618"/>
<g stroke="#fff" stroke-width="0.900" fill="none"><path d="M750.500 347h20M751 354h20.500M752 347v7M754.500 347v7M757 347v7M759.500 347v7M762 347v7M764.500 347v7M767 347v7M769.500 347v7"/><path d="M749.500 359q2.500-2 5 0t5 0 5 0 5 0 3.500-0.500M748.500 364q2.500-2 5 0t5 0 5 0 5 0 5 0"/></g>
<g fill="#6b3618"><circle cx="750.500" cy="370" r="1.600"/><circle cx="758.500" cy="370.500" r="1.600"/><circle cx="767" cy="370" r="1.600"/><circle cx="775" cy="369" r="1.600"/><circle cx="760" cy="342.500" r="1.500"/><circle cx="754.500" cy="344" r="0.800"/><circle cx="766" cy="344" r="0.800"/></g>
<path d="M764.700 378l-1.200 6.500" stroke="#333" stroke-width="1" stroke-dasharray="1 1"/>
<g transform="translate(761.2 398.0) rotate(0)" stroke="#f2b81f" stroke-width="0.9" stroke-linecap="round" fill="none"><g transform="rotate(0.0)"><path d="M0 0V-10.0"/></g><g transform="rotate(30.0)"><path d="M0 0V-10.0"/></g><g transform="rotate(60.0)"><path d="M0 0V-10.0"/></g><g transform="rotate(90.0)"><path d="M0 0V-10.0"/></g><g transform="rotate(120.0)"><path d="M0 0V-10.0"/></g><g transform="rotate(150.0)"><path d="M0 0V-10.0"/></g><g transform="rotate(180.0)"><path d="M0 0V-10.0"/></g><g transform="rotate(210.0)"><path d="M0 0V-10.0"/></g><g transform="rotate(240.0)"><path d="M0 0V-10.0"/></g><g transform="rotate(270.0)"><path d="M0 0V-10.0"/></g><g transform="rotate(300.0)"><path d="M0 0V-10.0"/></g><g transform="rotate(330.0)"><path d="M0 0V-10.0"/></g></g>
<circle cx="761.200" cy="398" r="1.600" fill="#f2b81f"/>
<defs><path id="lt1" d="M416.9,303.0C417.5,307.7 418.9,322.0 420.7,331.5C422.4,341.1 426.2,355.3 427.3,360.1 M447.0,292.0C447.5,297.5 449.0,314.0 449.9,324.9C450.8,335.9 452.1,352.4 452.5,357.9 M410.8,331.5C410.0,331.8 407.8,333.6 406.4,333.3C404.9,333.0 402.4,331.2 402.0,329.8C401.5,328.4 402.6,326.0 403.7,324.9C404.8,323.9 406.8,323.0 408.6,323.4C410.3,323.8 412.4,325.5 414.1,327.6C415.7,329.7 416.3,334.1 418.5,335.9C420.7,337.8 423.8,338.4 427.3,338.6C430.7,338.8 435.4,337.8 439.3,337.0C443.3,336.3 448.9,334.7 450.8,334.2 M474.5,312.9C473.7,312.1 470.3,310.5 469.7,308.5C469.0,306.4 469.4,303.2 470.5,300.8C471.7,298.4 474.0,295.6 476.7,294.2C479.4,292.7 483.3,291.4 486.6,292.0C489.9,292.5 494.2,293.8 496.5,297.5C498.8,301.1 499.8,307.5 500.4,314.0C501.1,320.4 500.5,329.7 500.4,335.9C500.3,342.2 499.9,348.8 499.8,351.3 M500.4,322.7C497.9,322.6 490.2,321.1 485.5,321.6C480.8,322.2 475.4,323.7 472.3,326.0C469.2,328.4 466.8,332.6 466.8,335.9C466.8,339.2 469.2,343.8 472.3,345.8C475.4,347.8 480.8,348.6 485.5,348.0C490.2,347.5 497.9,343.4 500.4,342.5 M517.4,292.0C517.5,296.7 517.6,311.0 518.5,320.5C519.3,330.1 521.8,344.4 522.4,349.1 M511.4,292.0C510.8,291.7 508.1,291.1 507.5,290.2C506.8,289.3 506.7,286.9 507.5,286.5C508.2,286.0 509.7,287.1 511.9,287.6C514.1,288.1 516.3,289.2 520.7,289.3C525.1,289.5 532.9,287.5 538.2,288.7C543.6,289.9 549.8,292.9 552.5,296.4C555.3,299.9 556.0,305.3 554.7,309.6C553.4,313.8 548.7,318.9 544.8,321.6C541.0,324.4 535.3,325.1 531.6,326.0C528.0,327.0 524.3,327.3 522.9,327.6 M566.8,292.0C567.0,296.7 567.3,311.0 567.9,320.5C568.6,330.1 570.3,344.4 570.8,349.1 M563.5,291.5C562.9,291.2 560.2,290.7 559.6,289.8C558.9,288.9 558.8,286.4 559.6,286.0C560.3,285.7 561.9,287.0 564.2,287.6C566.5,288.1 569.3,289.0 573.4,289.3C577.5,289.6 584.0,288.0 588.8,289.3C593.6,290.7 599.4,294.1 602.0,297.5C604.5,300.8 605.3,305.5 604.2,309.6C603.1,313.6 599.0,318.8 595.4,321.6C591.7,324.5 585.9,325.7 582.2,326.7C578.5,327.7 574.9,327.4 573.4,327.6 M620.7,292.0C619.9,294.2 617.0,301.1 616.3,305.2C615.5,309.2 615.0,312.9 616.3,316.2C617.5,319.5 620.5,322.7 624.0,324.9C627.4,327.1 632.9,329.5 637.1,329.3C641.4,329.2 647.2,324.8 649.2,323.8 M645.9,286.5C646.4,290.3 647.9,301.7 648.6,309.6C649.2,317.4 650.5,327.1 649.9,333.7C649.3,340.3 647.3,345.6 644.8,349.1C642.3,352.6 638.2,354.4 634.9,354.6C631.6,354.8 627.1,352.1 625.1,350.2C623.0,348.4 622.3,345.3 622.9,343.6C623.4,342.0 626.7,340.3 628.4,340.3C630.0,340.3 632.0,343.1 632.7,343.6"/></defs><g fill="none" stroke-linecap="round" stroke-linejoin="round"><g stroke="#6b3618" stroke-width="4.1"><use href="#lt1" x="4.80" y="7.40"/><use href="#lt1" x="4.42" y="6.81"/><use href="#lt1" x="4.03" y="6.22"/><use href="#lt1" x="3.65" y="5.62"/><use href="#lt1" x="3.26" y="5.03"/><use href="#lt1" x="2.88" y="4.44"/><use href="#lt1" x="2.59" y="4.00"/></g><g stroke="#fdf8ef" stroke-width="3.7"><use href="#lt1" x="2.21" y="3.40"/><use href="#lt1" x="1.82" y="2.81"/><use href="#lt1" x="1.44" y="2.22"/><use href="#lt1" x="1.06" y="1.63"/><use href="#lt1" x="0.67" y="1.04"/><use href="#lt1" x="0.34" y="0.52"/></g><use href="#lt1" stroke="#6b3618" stroke-width="5.2"/><use href="#lt1" stroke="#7fcdc5" stroke-width="4.2"/></g>
<defs><path id="lt2" d="M362.8,383.4C363.7,388.8 365.9,405.2 367.8,415.7C369.8,426.2 373.4,441.3 374.6,446.4 M395.1,373.2C395.7,379.3 397.8,398.1 398.9,409.8C400.0,421.5 401.3,437.9 401.8,443.5 M357.9,416.3C357.0,416.5 354.2,418.0 352.6,417.4C351.0,416.8 348.4,414.5 348.2,412.7C347.9,411.0 349.7,407.9 351.1,406.9C352.6,405.9 355.0,405.7 357.0,406.9C358.9,408.1 360.2,411.5 362.8,414.2C365.5,416.9 368.9,422.0 373.1,423.0C377.2,424.0 383.1,421.1 387.7,420.1C392.4,419.1 398.7,417.6 400.9,417.1 M437.6,394.6C436.7,394.3 433.4,394.1 432.3,392.8C431.2,391.6 430.3,388.6 431.1,387.0C431.9,385.3 434.9,383.0 437.0,382.9C439.0,382.8 442.4,384.3 443.4,386.4C444.4,388.4 444.3,392.7 442.8,395.2C441.4,397.6 437.7,400.8 434.6,401.0C431.6,401.3 426.7,399.1 424.4,396.6C422.0,394.2 419.8,389.9 420.6,386.4C421.3,382.8 425.5,377.6 428.8,375.2C432.1,372.9 436.3,371.4 440.5,372.3C444.6,373.2 450.3,375.5 453.7,380.5C457.1,385.5 461.0,395.2 461.0,402.5C461.0,409.8 457.3,419.3 453.7,424.5C450.0,429.6 443.9,432.9 439.0,433.3C434.1,433.7 428.1,431.2 424.4,426.8C420.6,422.4 417.3,413.4 416.5,406.9C415.6,400.4 418.9,391.0 419.4,387.8 M475.7,368.8C475.6,374.7 474.6,394.6 475.1,404.0C475.6,413.3 476.1,421.2 478.6,425.1C481.1,428.9 485.9,427.6 490.3,426.8C494.7,426.0 502.5,421.2 505.0,420.1 M515.2,377.6C515.1,382.0 514.7,395.2 514.3,404.0C514.0,412.7 513.4,425.9 513.2,430.3 M513.8,368.0C513.8,368.0 513.8,368.0 513.8,368.0 M534.3,365.9C534.2,371.2 533.6,387.4 533.7,398.1C533.8,408.8 534.7,425.0 534.9,430.3 M534.9,367.6C537.9,367.5 547.6,365.8 553.3,367.0C559.0,368.3 565.3,370.9 568.8,375.2C572.4,379.5 574.6,386.7 574.7,392.8C574.8,399.0 572.9,407.2 569.4,412.2C566.0,417.1 559.8,420.6 554.2,422.7C548.6,424.9 539.1,424.7 536.0,425.1 M592.3,389.3C591.5,388.2 587.3,385.4 587.6,382.9C587.9,380.3 591.0,375.9 594.3,374.1C597.7,372.2 603.5,370.9 607.5,371.7C611.6,372.6 616.2,375.6 618.7,379.0C621.1,382.5 622.2,386.6 622.2,392.2C622.2,397.9 620.3,405.6 618.7,412.7C617.0,419.9 613.3,431.3 612.2,435.0 M621.0,401.0C618.3,400.8 609.8,398.8 604.6,399.6C599.4,400.3 593.5,402.5 589.9,405.4C586.4,408.4 583.6,413.6 583.5,417.1C583.4,420.7 586.1,424.9 589.4,426.8C592.6,428.7 598.7,429.4 603.1,428.6C607.5,427.8 613.6,423.2 615.7,422.1 M638.3,373.2C637.5,375.4 633.9,382.2 633.3,386.4C632.7,390.5 632.7,394.2 634.5,398.1C636.3,402.0 640.3,407.1 644.2,409.8C648.0,412.5 653.1,414.7 657.3,414.2C661.6,413.7 667.6,408.1 669.7,406.9 M666.1,367.3C666.7,371.5 668.8,383.7 669.7,392.2C670.5,400.8 672.2,411.5 671.4,418.6C670.6,425.7 667.7,431.2 664.7,434.7C661.6,438.2 656.6,439.6 652.9,439.7C649.3,439.9 644.8,437.4 642.7,435.6C640.6,433.8 639.8,430.5 640.3,428.9C640.9,427.3 644.5,425.8 646.2,425.9C648.0,426.1 650.1,429.1 650.9,429.7 M707.7,389.9C708.6,388.8 712.9,386.0 713.0,383.4C713.2,380.9 711.3,376.8 708.6,374.7C705.9,372.5 701.1,369.8 696.9,370.3C692.8,370.7 686.8,374.2 683.7,377.6C680.6,381.0 678.0,386.9 678.4,390.8C678.9,394.7 682.4,398.1 686.6,401.0C690.9,404.0 699.3,405.4 704.2,408.4C709.1,411.3 714.2,415.2 716.0,418.6C717.7,422.0 716.9,426.3 714.5,428.9C712.0,431.4 705.5,433.6 701.3,433.8C697.1,434.1 692.0,432.1 689.6,430.3C687.1,428.5 686.2,425.0 686.6,423.0C687.1,421.1 690.6,418.6 692.5,418.6C694.5,418.6 697.4,422.3 698.4,423.0"/></defs><g fill="none" stroke-linecap="round" stroke-linejoin="round"><g stroke="#6b3618" stroke-width="4.8"><use href="#lt2" x="4.60" y="8.80"/><use href="#lt2" x="4.23" y="8.10"/><use href="#lt2" x="3.86" y="7.39"/><use href="#lt2" x="3.50" y="6.69"/><use href="#lt2" x="3.13" y="5.98"/><use href="#lt2" x="2.76" y="5.28"/><use href="#lt2" x="2.48" y="4.75"/></g><g stroke="#fdf8ef" stroke-width="4.4"><use href="#lt2" x="2.12" y="4.05"/><use href="#lt2" x="1.75" y="3.34"/><use href="#lt2" x="1.38" y="2.64"/><use href="#lt2" x="1.01" y="1.94"/><use href="#lt2" x="0.64" y="1.23"/><use href="#lt2" x="0.32" y="0.62"/></g><use href="#lt2" stroke="#6b3618" stroke-width="5.6000000000000005"/><use href="#lt2" stroke="#eb3f27" stroke-width="4.9"/></g>
<circle cx="513.800" cy="368" r="3.100" fill="#eb3f27" stroke="#6b3618" stroke-width="0.400"/>
<g fill="#8ed1c6">
<path d="M424.0,485.1Q472.3,498.9 514.5,493.8" fill="none" stroke="#8ed1c6" stroke-width="2.600" stroke-linecap="round"/>
<path d="M547.0,492.7Q591.0,497.1 640.4,479.6" fill="none" stroke="#8ed1c6" stroke-width="2.600" stroke-linecap="round"/>
<path d="M425.1,485.5Q416.5,465.3 392.1,469.7Q403.9,491.4 425.1,485.5Z"/>
<path d="M448.1,492.3Q450.2,469.7 426.2,460.2Q426.3,486.1 448.1,492.3Z"/>
<path d="M475.6,496.7Q475.6,472.8 449.9,463.1Q452.5,490.4 475.6,496.7Z"/>
<path d="M500.9,496.7Q504.9,475.3 482.2,465.9Q480.1,490.4 500.9,496.7Z"/>
<path d="M448.1,492.7Q425.4,489.4 414.1,513.0Q440.2,514.3 448.1,492.7Z"/>
<path d="M474.5,497.6Q448.9,499.4 437.6,526.8Q466.9,522.1 474.5,497.6Z"/>
<path d="M498.7,497.6Q475.6,501.2 471.2,527.5Q497.0,520.8 498.7,497.6Z"/>
<path d="M639.3,479.6Q660.9,483.1 670.1,460.2Q645.5,458.6 639.3,479.6Z"/>
<path d="M616.3,485.5Q637.3,478.6 635.4,453.6Q612.4,463.7 616.3,485.5Z"/>
<path d="M589.9,492.7Q612.0,485.3 611.9,458.7Q587.6,469.6 589.9,492.7Z"/>
<path d="M563.5,494.1Q583.4,486.6 578.9,463.1Q557.5,473.7 563.5,494.1Z"/>
<path d="M617.4,487.3Q625.4,508.2 650.8,505.5Q639.3,482.7 617.4,487.3Z"/>
<path d="M591.0,493.8Q599.4,517.6 628.4,520.2Q616.2,493.9 591.0,493.8Z"/>
<path d="M565.7,494.9Q568.7,518.2 594.9,523.5Q589.0,497.4 565.7,494.9Z"/>
</g>
<circle cx="530.100" cy="486.800" r="18" fill="#ee3a2b"/><ellipse cx="534" cy="475.500" rx="6" ry="3.800" fill="#f58ea0" transform="rotate(25 534 475.500)"/><circle cx="541.500" cy="483.500" r="1.500" fill="#f58ea0"/><path d="M519 495q4 4 9 4" stroke="#f58ea0" stroke-width="1.600" fill="none" stroke-linecap="round"/>
<text x="471.400" y="553.900" font-family="Liberation Serif" font-size="15" letter-spacing="3.88" fill="#7a5546">LOVE FROM</text>
<path d="M350.6,543.4C353.0,544.5 359.9,549.3 365.1,550.0C370.3,550.8 376.2,549.5 381.8,548.1C387.3,546.7 393.8,542.6 398.5,541.7C403.1,540.8 406.9,541.0 409.6,542.5C412.3,544.1 414.4,548.4 414.6,550.9C414.8,553.3 412.3,556.8 411.0,557.3C409.7,557.7 406.8,555.7 406.8,553.7C406.8,551.7 408.7,547.4 411.0,545.3C413.3,543.2 417.5,541.1 420.7,541.1C424.0,541.1 428.6,543.1 430.5,545.3C432.3,547.5 432.5,552.4 431.9,554.5C431.3,556.6 428.3,558.2 426.9,557.8C425.5,557.5 423.4,554.6 423.5,552.3C423.7,550.0 425.6,545.7 427.7,543.9C429.8,542.2 433.4,541.2 436.0,541.7C438.7,542.2 441.8,544.5 443.6,546.7C445.3,548.9 445.9,553.7 446.3,555.1" fill="none" stroke="#f2b81f" stroke-width="1.900" stroke-linecap="round"/>
<path d="M710.3,543.4C707.9,544.5 701.0,549.3 695.8,550.0C690.6,550.8 684.7,549.5 679.1,548.1C673.5,546.7 667.0,542.6 662.4,541.7C657.7,540.8 653.9,541.0 651.2,542.5C648.6,544.1 646.5,548.4 646.2,550.9C646.0,553.3 648.6,556.8 649.9,557.3C651.2,557.7 654.0,555.7 654.0,553.7C654.0,551.7 652.2,547.4 649.9,545.3C647.5,543.2 643.4,541.1 640.1,541.1C636.9,541.1 632.2,543.1 630.4,545.3C628.5,547.5 628.4,552.4 629.0,554.5C629.6,556.6 632.6,558.2 634.0,557.8C635.4,557.5 637.5,554.6 637.3,552.3C637.2,550.0 635.2,545.7 633.2,543.9C631.1,542.2 627.4,541.2 624.8,541.7C622.2,542.2 619.0,544.5 617.3,546.7C615.6,548.9 615.0,553.7 614.5,555.1" fill="none" stroke="#f2b81f" stroke-width="1.900" stroke-linecap="round"/>
<path d="M406.4,573.8C407.2,573.7 409.6,573.4 411.3,573.1C413.0,572.8 415.0,572.5 416.4,572.1C417.8,571.6 419.4,570.6 419.7,570.2C420.0,569.8 418.5,569.5 418.3,569.4 M413.1,573.1C412.7,574.6 411.2,579.9 410.8,582.5C410.3,585.1 410.0,586.8 410.3,588.7C410.5,590.6 412.0,593.1 412.3,594.0 M423.4,572.3C423.5,574.5 423.8,582.0 424.1,585.6C424.4,589.2 425.2,592.4 425.4,593.8 M435.4,571.7C435.4,573.5 435.6,578.7 435.4,582.5C435.2,586.3 434.5,592.6 434.4,594.6 M424.6,583.0C426.8,582.8 435.6,581.7 437.7,581.5 M443.1,579.6C444.7,579.4 451.5,579.0 452.8,578.1C454.2,577.2 452.2,575.0 451.3,574.1C450.3,573.2 448.5,572.4 447.2,572.7C445.9,573.0 444.4,574.2 443.6,575.8C442.8,577.5 442.2,580.1 442.4,582.5C442.5,584.9 443.5,588.5 444.6,590.2C445.8,591.9 447.8,592.6 449.2,592.6C450.7,592.5 452.6,590.7 453.3,589.7C454.1,588.7 453.5,587.0 453.5,586.4 M479.5,577.4C479.3,576.8 479.1,574.9 478.5,574.1C477.8,573.3 476.5,572.6 475.4,572.8C474.3,572.9 472.4,573.8 471.8,574.8C471.2,575.8 470.9,577.6 471.6,578.9C472.3,580.2 474.3,581.3 475.9,582.5C477.5,583.7 480.0,584.6 481.0,586.1C482.0,587.6 482.5,589.8 481.8,591.2C481.2,592.6 478.6,594.3 476.9,594.6C475.2,595.0 472.9,594.1 471.8,593.3C470.7,592.5 470.1,590.7 470.3,589.7C470.4,588.7 471.9,587.4 472.8,587.1C473.8,586.9 475.4,588.0 475.9,588.2 M489.2,572.3C489.2,574.0 489.2,579.1 489.0,582.5C488.9,585.9 488.3,591.1 488.2,592.8 M489.4,577.4C489.8,576.8 490.9,574.8 491.8,574.1C492.7,573.4 493.9,572.7 494.9,573.1C495.8,573.5 497.0,574.4 497.4,576.4C497.9,578.3 497.5,581.8 497.4,584.6C497.4,587.3 497.0,591.4 496.9,592.8 M497.6,577.4C498.1,576.8 499.4,574.5 500.5,573.8C501.6,573.1 503.0,572.7 504.1,573.3C505.2,573.9 506.8,575.2 507.2,577.4C507.6,579.6 507.1,583.7 506.7,586.6C506.2,589.5 505.0,593.3 504.6,594.6 M513.8,576.4C513.9,577.9 514.1,582.7 514.1,585.6C514.0,588.5 513.7,592.4 513.6,593.8 M522.1,573.3C522.0,574.8 521.5,579.8 521.5,582.5C521.5,585.2 521.4,587.9 522.1,589.7C522.7,591.5 524.4,592.9 525.6,593.3C526.9,593.6 528.8,592.4 529.7,591.7C530.7,591.1 531.0,589.9 531.3,589.5 M519.5,576.6C521.0,576.4 527.2,575.5 528.7,575.3 M536.4,572.3C536.5,574.3 537.0,581.0 537.2,584.6C537.5,588.2 537.8,592.3 537.9,593.8 M547.7,571.7C547.7,573.7 547.8,579.7 547.7,583.5C547.6,587.4 547.0,592.9 546.9,594.8 M536.9,583.0C539.1,582.8 548.0,581.7 550.3,581.5 M575.9,576.4C575.6,575.9 575.1,574.3 574.4,573.8C573.6,573.2 572.4,572.8 571.3,573.1C570.2,573.3 568.6,573.8 567.7,575.3C566.8,576.9 566.2,580.3 565.9,582.5C565.7,584.7 565.9,586.6 566.2,588.7C566.4,590.7 567.2,593.8 567.4,594.8 M564.1,582.5C565.7,582.3 572.2,581.2 573.8,581.0 M581.5,578.9C581.8,578.3 582.2,576.0 583.1,575.1C583.9,574.2 585.5,573.3 586.7,573.5C587.8,573.7 589.3,574.5 589.9,576.4C590.6,578.2 590.6,581.7 590.8,584.6C590.9,587.5 590.8,592.3 590.8,593.8 M590.8,583.7C589.9,583.6 587.2,582.8 585.6,583.0C584.1,583.2 582.6,584.1 581.5,585.1C580.5,586.1 579.4,587.6 579.5,588.9C579.6,590.1 580.9,591.9 582.1,592.6C583.2,593.2 585.2,593.0 586.7,592.8C588.1,592.5 590.1,591.5 590.8,591.2 M599.0,572.8C599.0,574.4 599.2,579.2 599.2,582.5C599.2,585.8 599.0,591.1 599.0,592.8 M599.5,576.9C599.9,576.3 601.0,574.2 602.1,573.5C603.1,572.8 604.6,572.3 605.6,572.8C606.7,573.2 607.8,574.4 608.2,576.4C608.6,578.3 608.3,581.8 608.2,584.6C608.1,587.3 607.8,591.4 607.7,592.8 M608.6,576.9C609.0,576.3 610.1,574.1 611.1,573.5C612.0,572.9 613.3,572.4 614.4,573.1C615.4,573.7 617.0,575.1 617.4,577.4C617.9,579.6 617.4,583.7 616.9,586.6C616.5,589.5 615.2,593.5 614.9,594.8 M624.1,576.4C624.1,577.9 624.3,582.7 624.3,585.6C624.3,588.5 624.0,592.4 623.9,593.8 M631.8,573.3C631.8,575.2 631.7,581.6 631.8,584.6C631.9,587.6 631.8,590.0 632.6,591.2C633.5,592.5 635.4,592.0 636.9,591.9C638.4,591.9 640.8,590.9 641.5,590.7 M644.6,574.3C644.7,575.5 644.5,579.4 644.9,581.5C645.4,583.5 646.1,585.6 647.2,586.6C648.2,587.6 649.9,587.9 651.3,587.6C652.7,587.4 654.9,585.5 655.6,585.1 M655.9,572.3C656.0,574.0 656.6,579.5 656.6,582.5C656.7,585.5 656.8,588.1 656.2,590.2C655.6,592.3 654.1,594.3 652.8,595.0C651.6,595.7 649.7,594.9 648.7,594.3C647.8,593.8 647.1,592.5 647.2,591.7C647.2,591.0 648.4,589.9 649.0,589.7C649.7,589.5 650.7,590.5 651.1,590.7" fill="none" stroke="#ee4535" stroke-width="1.500" stroke-linecap="round" stroke-linejoin="round"/>
<circle cx="513.850" cy="573.800" r="0.900" fill="#ee4535"/><circle cx="624.100" cy="573.800" r="0.900" fill="#ee4535"/>
<circle cx="375.4" cy="619.800" r="1.900" fill="#eb3f27"/>
<circle cx="406.4" cy="619.800" r="1.900" fill="#eb3f27"/>
<circle cx="437.5" cy="619.800" r="1.900" fill="#eb3f27"/>
<circle cx="468.5" cy="619.800" r="1.900" fill="#eb3f27"/>
<circle cx="499.6" cy="619.800" r="1.900" fill="#eb3f27"/>
<circle cx="530.6" cy="619.800" r="1.900" fill="#eb3f27"/>
<circle cx="561.6" cy="619.800" r="1.900" fill="#eb3f27"/>
<circle cx="592.7" cy="619.800" r="1.900" fill="#eb3f27"/>
<circle cx="623.7" cy="619.800" r="1.900" fill="#eb3f27"/>
<circle cx="654.8" cy="619.800" r="1.900" fill="#eb3f27"/>
<circle cx="685.8" cy="619.800" r="1.900" fill="#eb3f27"/>
<path d="M358.900,620.500L376.2,608.800L391.7,620.500L407.2,608.800L422.8,620.500L438.3,608.800L453.8,620.500L469.3,608.800L484.8,620.500L500.4,608.800L515.9,620.500L531.4,608.800L546.9,620.500L562.4,608.800L578.0,620.500L593.5,608.800L609.0,620.500L624.5,608.800L640.0,620.500L655.6,608.800L671.1,620.500L686.6,608.800L702.1,620.500" fill="none" stroke="#8ed1c6" stroke-width="2.400" stroke-linejoin="miter" stroke-linecap="round"/>
<path d="M327.2,565.8L318.8,548.8L318.0,549.0L320.4,567.8ZM326.1,569.5L336.9,556.2L336.3,555.6L321.5,564.1ZM322.5,570.2L339.4,573.1L339.7,572.4L325.1,563.4ZM320.2,567.1L324.8,586.1L325.6,586.1L327.4,566.5ZM322.9,563.3L309.7,570.2L309.9,570.9L324.7,570.3Z" fill="#eb3f27" stroke="#eb3f27" stroke-width="3.400" stroke-linejoin="round"/>
<g transform="translate(743.9 593.8) rotate(12)" stroke="#eb3f27" stroke-width="3.4" stroke-linecap="round" fill="none"><g transform="rotate(0.0)"><path d="M0 0V-12.5"/></g><g transform="rotate(45.0)"><path d="M0 0V-12.5"/></g><g transform="rotate(90.0)"><path d="M0 0V-12.5"/></g><g transform="rotate(135.0)"><path d="M0 0V-12.5"/></g><g transform="rotate(180.0)"><path d="M0 0V-12.5"/></g><g transform="rotate(225.0)"><path d="M0 0V-12.5"/></g><g transform="rotate(270.0)"><path d="M0 0V-12.5"/></g><g transform="rotate(315.0)"><path d="M0 0V-12.5"/></g></g>
</svg>
<div class="a bx" style="left:260px;top:129px;width:542px;height:542px;border:1px solid #1c1c1c"></div>
<div class="a" style="left:1040px;top:59px;width:325px;height:11px;background:#424242;"></div>
<div class="a" style="left:1040px;top:70px;width:325px;height:1px;background:#383838;"></div>
<svg class="a" style="left:1064px;top:62px" width="8" height="6" viewBox="0 0 8 6"><path d="M3.200 0.500L0.800 3l2.400 2.500M7 0.500L4.600 3 7 5.500" fill="none" stroke="#e0e0e0" stroke-width="1.100"/></svg>
<svg class="a" style="left:1351.500px;top:62px" width="8" height="6" viewBox="0 0 8 6"><path d="M1 0.500L3.400 3 1 5.500M4.800 0.500L7.200 3 4.800 5.500" fill="none" stroke="#e0e0e0" stroke-width="1.100"/></svg>
<div class="a" style="left:1040px;top:71px;width:37px;height:614px;background:#535353;"></div>
<div class="a" style="left:1077px;top:71px;width:3px;height:614px;background:#3a3a3a;"></div>
<div class="a" style="left:1049px;top:74px;width:20px;height:4px;background:repeating-linear-gradient(90deg,#3e3e3e 0 1px,transparent 1px 2px)"></div>
<svg class="a" style="left:1051px;top:84px" width="18" height="19" viewBox="0 0 18 19"><rect x="1.700" y="1.700" width="4" height="4" fill="none" stroke="#dcdcdc" stroke-width="1.100"/><rect x="1.700" y="7.700" width="4" height="4" fill="none" stroke="#dcdcdc" stroke-width="1.100"/><rect x="1.200" y="13.200" width="5" height="5" fill="#dcdcdc"/><path d="M9 3.500c5-1.500 7 4 5.500 8-1 2.500-2.500 4-4.500 5 3-3 4-6.500 3-9.500-1-1.500-2.500-1.500-4-1z" fill="#dcdcdc"/><path d="M8.500 2l4.500 0.500-3 3.500z" fill="#dcdcdc"/></svg>
<svg class="a" style="left:1053.500px;top:117px" width="11" height="14" viewBox="0 0 11 14"><path d="M0.300 14V4.300q0-0.800 0.800-0.800h0.400v-2.300q0-0.900 0.900-0.900h1.900q0.900 0 0.900 0.900v2.300h0.600v-2.300q0-0.900 0.900-0.900h1.900q0.900 0 0.900 0.900v2.300h0.400q0.800 0 0.800 0.800V14z" fill="#d8d8d8"/></svg>
<div class="a" style="left:1080px;top:71px;width:285px;height:28px;background:#424242;"></div>
<div class="a" style="left:1080px;top:99px;width:285px;height:242px;background:#535353;"></div>
<div class="a" style="left:1080px;top:71px;width:42px;height:29px;background:#535353;"></div>
<div class="a" style="left:1122px;top:71px;width:1px;height:28px;background:#383838;"></div>
<div class="a" style="left:1182px;top:71px;width:1px;height:28px;background:#383838;"></div>
<div class="a" style="left:1245px;top:71px;width:1px;height:28px;background:#383838;"></div>
<div class="a" style="left:1302px;top:71px;width:1px;height:28px;background:#383838;"></div>
<div class="a" style="left:1122px;top:98px;width:243px;height:1px;background:#383838;"></div>
<span class="t" style="left:1089.00px;top:76.75px;font:bold 10.5px/14.5px 'Liberation Sans',sans-serif;color:#ffffff;letter-spacing:-0.443px;">Color</span>
<span class="t" style="left:1130.70px;top:76.75px;font:bold 10.5px/14.5px 'Liberation Sans',sans-serif;color:#a6a6a6;letter-spacing:-0.555px;">Swatches</span>
<span class="t" style="left:1191.80px;top:76.75px;font:bold 10.5px/14.5px 'Liberation Sans',sans-serif;color:#a6a6a6;letter-spacing:-0.391px;">Gradients</span>
<span class="t" style="left:1255.00px;top:76.75px;font:bold 10.5px/14.5px 'Liberation Sans',sans-serif;color:#a6a6a6;letter-spacing:-0.352px;">Patterns</span>
<div class="a" style="left:1350px;top:80px;width:10px;height:8px;background:repeating-linear-gradient(#d0d0d0 0 1px,transparent 1px 2.330px)"></div>
<div class="a bx" style="left:1109px;top:119.500px;width:9.500px;height:11px;background:#f4f4f4;border:1px solid #5a5a5a"></div>
<div class="a bx" style="left:1088px;top:108px;width:22px;height:24px;background:#2c2c2c;border:1px solid #858585"></div>
<div class="a bx" style="left:1089.600px;top:109.600px;width:18.800px;height:22px;background:#262626;border:1.500px solid #f6f6f6"></div>
<div class="a" style="left:1125px;top:106px;width:188px;height:213px;background:linear-gradient(to bottom,rgba(0,0,0,0),#000),linear-gradient(to right,#fff,#f00)"></div>
<div class="a" style="left:1330px;top:106px;width:19px;height:213px;background:linear-gradient(to bottom,#f00 0%,#f0f 16.700%,#00f 33.300%,#0ff 50%,#0f0 66.700%,#ff0 83.300%,#f00 100%)"></div>
<svg class="a" style="left:1319px;top:313.500px" width="10" height="10" viewBox="0 0 10 10"><path d="M1.500 1.500h3l4 3.500-4 3.500h-3z" fill="#f4f4f4" stroke="#333" stroke-width="1"/></svg>
<div class="a" style="left:1080px;top:340px;width:285px;height:2px;background:#383838;"></div>
<div class="a" style="left:1080px;top:342px;width:285px;height:28px;background:#424242;"></div>
<div class="a" style="left:1080px;top:370px;width:285px;height:1px;background:#383838;"></div>
<div class="a" style="left:1350px;top:351.500px;width:10px;height:8px;background:repeating-linear-gradient(#d0d0d0 0 1px,transparent 1px 2.330px)"></div>
<div class="a" style="left:1080px;top:371px;width:285px;height:314px;background:#535353;"></div>
<div class="a" style="left:1080px;top:402px;width:285px;height:1px;background:#424242;"></div>
<div class="a" style="left:1080px;top:430px;width:285px;height:1px;background:#484848;"></div>
<svg class="a" style="left:1280px;top:384px" width="11" height="12" viewBox="0 0 13 14"><path d="M4 5V1h5l3 3v8.500H7.500" fill="none" stroke="#dcdcdc" stroke-width="1.200"/><path d="M8.500 1v3.500H12" fill="none" stroke="#dcdcdc" stroke-width="1"/><rect x="0.500" y="7" width="6" height="6.500" fill="#dcdcdc"/></svg>
<div class="a bx" style="left:1302px;top:380px;width:10px;height:17px;border-radius:5px;border:1px solid #686868;background:#484848"></div>
<div class="a" style="left:1303px;top:380px;width:8px;height:8px;border-radius:4px;background:#e4e4e4"></div>
<div class="a bx" style="left:1240px;top:408.5px;width:70.500px;height:16px;border:1px solid #686868;border-radius:3px;background:#4e4e4e"></div>
<div class="a" style="left:1295px;top:409.5px;width:1px;height:14.0px;background:#686868;"></div>
<svg class="a" style="left:1299px;top:413.5px" width="8" height="6" viewBox="0 0 8 6"><path d="M0.700 1l3.300 3.300L7.300 1" fill="none" stroke="#d0d0d0" stroke-width="1.200"/></svg>
<span class="t" style="left:1265.00px;top:409.00px;font:11px/15px 'Liberation Sans',sans-serif;color:#e8e8e8;letter-spacing:-0.658px;">100%</span>
<div class="a bx" style="left:1240px;top:436.5px;width:70.500px;height:16px;border:1px solid #686868;border-radius:3px;background:#4e4e4e"></div>
<div class="a" style="left:1295px;top:437.5px;width:1px;height:14.0px;background:#686868;"></div>
<svg class="a" style="left:1299px;top:441.5px" width="8" height="6" viewBox="0 0 8 6"><path d="M0.700 1l3.300 3.300L7.300 1" fill="none" stroke="#d0d0d0" stroke-width="1.200"/></svg>
<span class="t" style="left:1265.00px;top:437.00px;font:11px/15px 'Liberation Sans',sans-serif;color:#e8e8e8;letter-spacing:-0.658px;">100%</span>
<div class="a" style="left:1080px;top:461px;width:270px;height:24px;background:#535353;"></div>
<div class="a" style="left:1080px;top:486px;width:30px;height:39px;background:#535353;"></div>
<div class="a" style="left:1110px;top:486px;width:240px;height:39px;background:#535353;"></div>
<div class="a" style="left:1080px;top:525px;width:270px;height:1px;background:#464646;"></div>
<div class="a" style="left:1080px;top:526px;width:30px;height:40px;background:#535353;"></div>
<div class="a" style="left:1110px;top:526px;width:240px;height:40px;background:#535353;"></div>
<div class="a" style="left:1080px;top:566px;width:270px;height:1px;background:#464646;"></div>
<div class="a" style="left:1080px;top:567px;width:30px;height:40px;background:#535353;"></div>
<div class="a" style="left:1110px;top:567px;width:240px;height:40px;background:#535353;"></div>
<div class="a" style="left:1080px;top:607px;width:270px;height:1px;background:#464646;"></div>
<div class="a" style="left:1080px;top:608px;width:30px;height:40px;background:#535353;"></div>
<div class="a" style="left:1110px;top:608px;width:240px;height:40px;background:#6a6a6a;"></div>
<div class="a" style="left:1080px;top:648px;width:270px;height:1px;background:#464646;"></div>
<div class="a" style="left:1080px;top:649px;width:30px;height:40px;background:#535353;"></div>
<div class="a" style="left:1110px;top:649px;width:240px;height:40px;background:#535353;"></div>
<div class="a" style="left:1080px;top:689px;width:270px;height:1px;background:#464646;"></div>
<div class="a" style="left:1110px;top:486px;width:1px;height:199px;background:#464646;"></div>
<div class="a" style="left:1339px;top:486px;width:11px;height:39px;background:#484848;"></div>
<span class="t" style="left:1323.50px;top:497.35px;font:italic 13.5px/17.5px 'Liberation Sans',sans-serif;color:#e2e2e2;letter-spacing:0.500px;-webkit-text-stroke:0.300px #e2e2e2;">fx</span>
<svg class="a" style="left:1340.500px;top:504.0px" width="8" height="6" viewBox="0 0 8 6"><path d="M0.700 1l3.300 3.300L7.300 1" fill="none" stroke="#d0d0d0" stroke-width="1.200"/></svg>
<div class="a" style="left:1339px;top:526px;width:11px;height:40px;background:#484848;"></div>
<span class="t" style="left:1323.50px;top:537.85px;font:italic 13.5px/17.5px 'Liberation Sans',sans-serif;color:#e2e2e2;letter-spacing:0.500px;-webkit-text-stroke:0.300px #e2e2e2;">fx</span>
<svg class="a" style="left:1340.500px;top:544.5px" width="8" height="6" viewBox="0 0 8 6"><path d="M0.700 1l3.300 3.300L7.300 1" fill="none" stroke="#d0d0d0" stroke-width="1.200"/></svg>
<svg class="a" style="left:1088.500px;top:626px" width="14" height="10" viewBox="0 0 14 10"><path d="M0.500 5C2.500 1.800 4.700 0.700 7 0.700S11.500 1.800 13.500 5C11.500 8.200 9.300 9.300 7 9.300S2.500 8.200 0.500 5z" fill="#e8e8e8"/><circle cx="7" cy="5" r="2.600" fill="#535353"/><circle cx="7" cy="5" r="1.300" fill="#e8e8e8"/></svg>
<svg class="a" style="left:1088.500px;top:666px" width="14" height="10" viewBox="0 0 14 10"><path d="M0.500 5C2.500 1.800 4.700 0.700 7 0.700S11.500 1.800 13.500 5C11.500 8.200 9.300 9.300 7 9.300S2.500 8.200 0.500 5z" fill="#e8e8e8"/><circle cx="7" cy="5" r="2.600" fill="#535353"/><circle cx="7" cy="5" r="1.300" fill="#e8e8e8"/></svg>
<svg class="a" style="left:1139.2px;top:623.2px" width="14" height="14" viewBox="0 0 14 14"><path d="M0 0h14v4h-1.300v-2.400h-4.700v10.900h2.200v1.500h-6.400v-1.500h2.200v-10.900h-4.700v2.400h-1.300z" fill="#e6e6e6"/></svg>
<svg class="a" style="left:1139.2px;top:663.8px" width="14" height="14" viewBox="0 0 14 14"><path d="M0 0h14v4h-1.300v-2.400h-4.700v10.900h2.200v1.500h-6.400v-1.500h2.200v-10.900h-4.700v2.400h-1.300z" fill="#e6e6e6"/></svg>
<svg class="a" style="left:1139.2px;top:582px" width="14" height="14" viewBox="0 0 14 14"><path d="M0 0h14v4h-1.300v-2.400h-4.700v10.900h2.200v1.500h-6.400v-1.500h2.200v-10.900h-4.700v2.400h-1.300z" fill="#e6e6e6"/></svg>
<svg class="a" style="left:1127.500px;top:610.700px" width="37" height="37" viewBox="0 0 37 37"><path d="M0.700 12V0.700H12.500M24.500 0.700h11.800V12M36.300 25v11.300H24.500M12.500 36.300H0.700V25" fill="none" stroke="#f0f0f0" stroke-width="1.400"/></svg>
<span class="t" style="left:1171.00px;top:622.75px;font:10.5px/14.5px 'Liberation Sans',sans-serif;color:#f0f0f0;letter-spacing:-0.340px;">22</span>
<span class="t" style="left:1171.00px;top:663.25px;font:10.5px/14.5px 'Liberation Sans',sans-serif;color:#f0f0f0;letter-spacing:-0.432px;">Love from</span>
<div class="a" style="left:1350px;top:461px;width:15px;height:224px;background:#4a4a4a;"></div>
<div class="a" style="left:1349px;top:461px;width:1px;height:224px;background:#424242;"></div>
<svg class="a" style="left:1352.500px;top:467px" width="10" height="7" viewBox="0 0 10 7"><path d="M1 5.800L5 1.500l4 4.300" fill="none" stroke="#8c8c8c" stroke-width="1.300"/></svg>
<div class="a" style="left:1351px;top:478px;width:11.500px;height:155px;background:#6b6b6b"></div>
<div class="a" style="left:818.300px;top:128px;width:455px;height:464px;background:#fb0707;border-radius:3px;box-shadow:0 1px 5px rgba(0,0,0,.45)"></div>
<div class="a" style="left:823px;top:133px;width:445.5px;height:26px;background:#ffffff;"></div>
<div class="a" style="left:823px;top:159px;width:445.5px;height:428px;background:#535353;"></div>
<span class="t" style="left:828.30px;top:135.60px;font:12px/16px 'Liberation Sans',sans-serif;color:#1a0a1a;letter-spacing:-0.359px;">Export Layers To Files</span>
<span class="t" style="left:835.50px;top:174.50px;font:11px/15px 'Liberation Sans',sans-serif;color:#d2d2d2;letter-spacing:-0.090px;">Destination:</span>
<div class="a bx" style="left:835px;top:205px;width:160px;height:20px;background:#454545;border:1px solid #646464"></div>
<span class="t" style="left:837.30px;top:207.00px;font:11px/15px 'Liberation Sans',sans-serif;color:#ececec;letter-spacing:-0.240px;">C:\Users\MY PC\Downloads</span>
<div class="a bx" style="left:1005px;top:203px;width:87.500px;height:24px;background:#454545;border:1px solid #606060;border-radius:2px"></div>
<span class="t" style="left:1025.00px;top:208.80px;font:11px/15px 'Liberation Sans',sans-serif;color:#ececec;letter-spacing:0.072px;">Browse...</span>
<span class="t" style="left:835.40px;top:238.50px;font:11px/15px 'Liberation Sans',sans-serif;color:#d2d2d2;letter-spacing:-0.221px;">File Name Prefix:</span>
<div class="a bx" style="left:835px;top:262px;width:339px;height:20px;background:#454545;border:1px solid #646464"></div>
<span class="t" style="left:837.40px;top:264.00px;font:11px/15px 'Liberation Sans',sans-serif;color:#ececec;letter-spacing:-0.172px;">Happy Holidays 2022</span>
<div class="a bx" style="left:1189px;top:204px;width:63.800px;height:24px;border:1.500px solid #d4d4d4;border-radius:12px"></div>
<span class="t" style="left:1210.50px;top:208.50px;font:11px/15px 'Liberation Sans',sans-serif;color:#ececec;letter-spacing:-0.559px;">Run</span>
<div class="a bx" style="left:1189px;top:239px;width:63.800px;height:24px;border:1px solid #727272;border-radius:12px"></div>
<span class="t" style="left:1203.50px;top:243.50px;font:11px/15px 'Liberation Sans',sans-serif;color:#ececec;letter-spacing:-0.456px;">Cancel</span>
<div class="a bx" style="left:837px;top:294px;width:13.500px;height:13.500px;background:#454545;border:1px solid #6e6e6e;border-radius:2px"></div>
<span class="t" style="left:855.60px;top:293.50px;font:11px/15px 'Liberation Sans',sans-serif;color:#ececec;letter-spacing:-0.266px;">Visible Layers Only</span>
<div class="a bx" style="left:835px;top:324.500px;width:339px;height:183px;border:1px solid #3d3d3d"></div>
<div class="a" style="left:847px;top:322px;width:61px;height:6px;background:#535353;"></div>
<span class="t" style="left:852.20px;top:319.90px;font:11px/15px 'Liberation Sans',sans-serif;color:#ececec;letter-spacing:-0.068px;">File Type:</span>
<div class="a bx" style="left:853px;top:338.500px;width:99px;height:20px;background:#454545;border:1px solid #646464;border-radius:3px"></div>
<span class="t" style="left:856.50px;top:341.50px;font:11px/15px 'Liberation Sans',sans-serif;color:#ececec;letter-spacing:-1.000px;">PDF</span>
<svg class="a" style="left:938.500px;top:345.500px" width="9" height="6" viewBox="0 0 9 6"><path d="M0.700 0.800l3.800 3.800L8.300 0.800" fill="none" stroke="#c8c8c8" stroke-width="1.200"/></svg>
<div class="a bx" style="left:854px;top:371px;width:13.500px;height:13.500px;background:#c4c4c4;border:1px solid #cacaca;border-radius:2px"></div>
<svg class="a" style="left:856px;top:373.500px" width="10" height="9" viewBox="0 0 10 9"><path d="M1 4.500l2.800 2.800L9 1.500" fill="none" stroke="#2a2a2a" stroke-width="1.700"/></svg>
<span class="t" style="left:872.60px;top:370.50px;font:11px/15px 'Liberation Sans',sans-serif;color:#ececec;letter-spacing:-0.163px;">Include ICC Profile</span>
<div class="a bx" style="left:852px;top:402.500px;width:305px;height:93px;border:1px solid #3d3d3d"></div>
<div class="a" style="left:864px;top:400px;width:77px;height:6px;background:#535353;"></div>
<span class="t" style="left:869.00px;top:397.00px;font:11px/15px 'Liberation Sans',sans-serif;color:#ececec;letter-spacing:-0.252px;">PDF Options:</span>
<span class="t" style="left:907.40px;top:427.50px;font:11px/15px 'Liberation Sans',sans-serif;color:#dcdcdc;letter-spacing:-0.258px;">Encoding:</span>
<div class="a bx" style="left:974px;top:428.500px;width:13px;height:13px;border-radius:50%;background:#c8c8c8;border:1px solid #dadada"></div>
<div class="a" style="left:978.500px;top:433px;width:4px;height:4px;border-radius:50%;background:#2a2a2a"></div>
<span class="t" style="left:992.50px;top:427.50px;font:11px/15px 'Liberation Sans',sans-serif;color:#ececec;letter-spacing:-0.538px;">ZIP</span>
<div class="a bx" style="left:1027px;top:428.500px;width:13px;height:13px;border-radius:50%;background:#484848;border:1px solid #7c7c7c"></div>
<span class="t" style="left:1045.60px;top:427.50px;font:11px/15px 'Liberation Sans',sans-serif;color:#ececec;letter-spacing:-1.208px;">JPEG</span>
<span class="t" style="left:907.40px;top:455.50px;font:11px/15px 'Liberation Sans',sans-serif;color:#7e7e7e;letter-spacing:0.039px;">Quality:</span>
<div class="a" style="left:968px;top:462.5px;width:90px;height:2.8000000000000114px;background:#6e6e6e;border-radius:1.500px;"></div>
<svg class="a" style="left:1021.500px;top:459px" width="11" height="8" viewBox="0 0 11 8"><path d="M5.500 0.500L10 5v2.500H1V5z" fill="#f6f6f6" stroke="#444" stroke-width="0.600"/></svg>
<div class="a bx" style="left:1072px;top:452px;width:29.500px;height:19.500px;background:#505050;border:1px solid #626262"></div>
<span class="t" style="left:1075.00px;top:454.00px;font:11px/15px 'Liberation Sans',sans-serif;color:#7c7c7c;letter-spacing:0.000px;">8</span>
<div class="a bx" style="left:835px;top:523px;width:422px;height:50.500px;border:1px solid #3d3d3d"></div>
<div class="a bx" style="left:836.500px;top:526.500px;width:365px;height:34.500px;border:5px solid #fb0707;border-radius:4px;background:#515151;box-shadow:0 0 3px rgba(0,0,0,.4)"></div>
<span class="t" style="left:852.20px;top:534.50px;font:11px/15px 'Liberation Sans',sans-serif;color:#ececec;letter-spacing:-0.056px;">Please specify the format and location for saving each layer as a file.</span>
<svg class="a" style="left:1140px;top:200px" width="80" height="330" viewBox="1140 200 80 330"><path d="M1155.400,515.700 L1166.100,440 L1190.300,260 L1195.200,222 L1197.600,216 L1199.800,216 L1200.200,222 L1195.800,260 L1169,440 L1157.600,516 Z" fill="#df0a0a"/><path d="M1192.700,222.300 L1198.700,215.200 L1203,223.400" fill="none" stroke="#df0a0a" stroke-width="2.600" stroke-linejoin="miter" stroke-linecap="butt"/></svg>
</body></html>
